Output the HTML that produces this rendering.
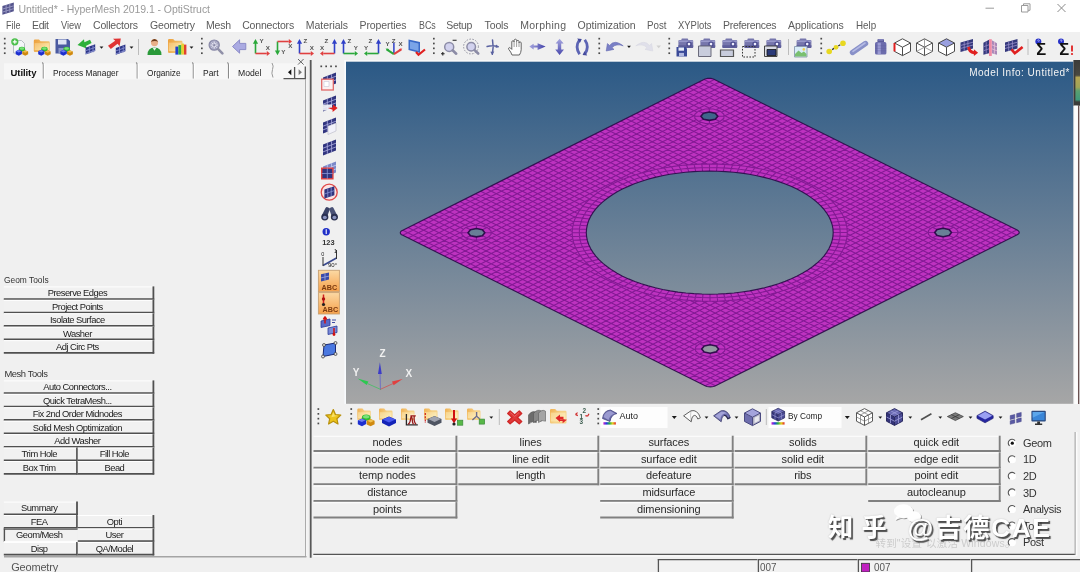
<!DOCTYPE html>
<html lang="zh"><head><meta charset="utf-8"><title>Untitled* - HyperMesh 2019.1 - OptiStruct</title>
<style>
html,body{margin:0;padding:0;background:#f0f0f0;overflow:hidden;}
html{width:1080px;height:572px;}
body{width:1080px;height:572px;overflow:hidden;position:relative;font-family:"Liberation Sans", "Noto Sans CJK SC", sans-serif;}
#chrome,#top{position:absolute;left:0;top:0;}
#txt{position:absolute;left:0;top:0;width:1080px;height:572px;will-change:transform;}
.t{position:absolute;white-space:nowrap;line-height:1;}
.c{transform:translateX(-50%);}
</style></head><body>
<svg id="chrome" width="1080" height="572" viewBox="0 0 1080 572">
<rect x="0" y="0" width="1080" height="572" fill="#f0f0f0" />
<rect x="0" y="0" width="1080" height="32" fill="#ffffff" />
<line x1="985.5" y1="8.2" x2="994" y2="8.2" stroke="#9a9a9a" stroke-width="1" />
<path d="M1021.5 5.5h6.5v6.5h-6.5z M1023.5 5.5v-1.7h6.5v6.5h-2" fill="none" stroke="#9a9a9a" stroke-width="1"/>
<path d="M1057.5 4l8 8M1065.5 4l-8 8" stroke="#8a8a8a" stroke-width="1" fill="none"/>
<rect x="4" y="63.2" width="302" height="16.2" fill="#f7f7f7" />
<path d="M42.1 62.5q1.2 0.5 1.2 2.5V78.5" fill="none" stroke="#8a8a8a" stroke-width="1.1"/>
<line x1="44.3" y1="64" x2="44.3" y2="78.5" stroke="#ffffff" stroke-width="1" />
<path d="M136 62.5q1.2 0.5 1.2 2.5V78.5" fill="none" stroke="#8a8a8a" stroke-width="1.1"/>
<line x1="138.2" y1="64" x2="138.2" y2="78.5" stroke="#ffffff" stroke-width="1" />
<path d="M192.1 62.5q1.2 0.5 1.2 2.5V78.5" fill="none" stroke="#8a8a8a" stroke-width="1.1"/>
<line x1="194.3" y1="64" x2="194.3" y2="78.5" stroke="#ffffff" stroke-width="1" />
<path d="M227.3 62.5q1.2 0.5 1.2 2.5V78.5" fill="none" stroke="#8a8a8a" stroke-width="1.1"/>
<line x1="229.5" y1="64" x2="229.5" y2="78.5" stroke="#ffffff" stroke-width="1" />
<path d="M272 63q2 3 0.5 6.5t0.5 8" fill="none" stroke="#9a9a9a" stroke-width="1"/>
<path d="M283.5 78.7H305.3V66.5M294.6 67V78.5" fill="none" stroke="#555" stroke-width="1.3"/>
<path d="M291.3 69.3v6l-3.3-3z" fill="#111"/>
<path d="M298.6 69.3v6l3.3-3z" fill="#777"/>
<path d="M298 59l5.6 5.6M303.6 59l-5.6 5.6" stroke="#666" stroke-width="1" fill="none"/>
<line x1="305.8" y1="79" x2="305.8" y2="557" stroke="#a4a4a4" stroke-width="1.4" />
<line x1="306.7" y1="79" x2="306.7" y2="556.5" stroke="#ffffff" stroke-width="1" />
<line x1="4" y1="556.8" x2="306.4" y2="556.8" stroke="#a4a4a4" stroke-width="1.5" />
<line x1="310.7" y1="60" x2="310.7" y2="557.8" stroke="#585858" stroke-width="1.8" />
<rect x="3.8" y="286.4" width="150.4" height="13.44" fill="#f1f1f1" />
<line x1="3.8" y1="286.9" x2="153.2" y2="286.9" stroke="#ffffff" stroke-width="1" />
<line x1="3.8" y1="299.14" x2="154.2" y2="299.14" stroke="#505050" stroke-width="1.8" />
<line x1="153.4" y1="286.4" x2="153.4" y2="299.84" stroke="#505050" stroke-width="1.8" />
<rect x="3.8" y="299.84" width="150.4" height="13.44" fill="#f1f1f1" />
<line x1="3.8" y1="300.34" x2="153.2" y2="300.34" stroke="#ffffff" stroke-width="1" />
<line x1="3.8" y1="312.58" x2="154.2" y2="312.58" stroke="#505050" stroke-width="1.8" />
<line x1="153.4" y1="299.84" x2="153.4" y2="313.28" stroke="#505050" stroke-width="1.8" />
<rect x="3.8" y="313.28" width="150.4" height="13.44" fill="#f1f1f1" />
<line x1="3.8" y1="313.78" x2="153.2" y2="313.78" stroke="#ffffff" stroke-width="1" />
<line x1="3.8" y1="326.02" x2="154.2" y2="326.02" stroke="#505050" stroke-width="1.8" />
<line x1="153.4" y1="313.28" x2="153.4" y2="326.72" stroke="#505050" stroke-width="1.8" />
<rect x="3.8" y="326.72" width="150.4" height="13.44" fill="#f1f1f1" />
<line x1="3.8" y1="327.22" x2="153.2" y2="327.22" stroke="#ffffff" stroke-width="1" />
<line x1="3.8" y1="339.46" x2="154.2" y2="339.46" stroke="#505050" stroke-width="1.8" />
<line x1="153.4" y1="326.72" x2="153.4" y2="340.16" stroke="#505050" stroke-width="1.8" />
<rect x="3.8" y="340.16" width="150.4" height="13.44" fill="#f1f1f1" />
<line x1="3.8" y1="340.66" x2="153.2" y2="340.66" stroke="#ffffff" stroke-width="1" />
<line x1="3.8" y1="352.9" x2="154.2" y2="352.9" stroke="#505050" stroke-width="1.8" />
<line x1="153.4" y1="340.16" x2="153.4" y2="353.6" stroke="#505050" stroke-width="1.8" />
<rect x="3.8" y="380.4" width="150.4" height="13.44" fill="#f1f1f1" />
<line x1="3.8" y1="380.9" x2="153.2" y2="380.9" stroke="#ffffff" stroke-width="1" />
<line x1="3.8" y1="393.14" x2="154.2" y2="393.14" stroke="#505050" stroke-width="1.8" />
<line x1="153.4" y1="380.4" x2="153.4" y2="393.84" stroke="#505050" stroke-width="1.8" />
<rect x="3.8" y="393.84" width="150.4" height="13.44" fill="#f1f1f1" />
<line x1="3.8" y1="394.34" x2="153.2" y2="394.34" stroke="#ffffff" stroke-width="1" />
<line x1="3.8" y1="406.58" x2="154.2" y2="406.58" stroke="#505050" stroke-width="1.8" />
<line x1="153.4" y1="393.84" x2="153.4" y2="407.28" stroke="#505050" stroke-width="1.8" />
<rect x="3.8" y="407.28" width="150.4" height="13.44" fill="#f1f1f1" />
<line x1="3.8" y1="407.78" x2="153.2" y2="407.78" stroke="#ffffff" stroke-width="1" />
<line x1="3.8" y1="420.02" x2="154.2" y2="420.02" stroke="#505050" stroke-width="1.8" />
<line x1="153.4" y1="407.28" x2="153.4" y2="420.72" stroke="#505050" stroke-width="1.8" />
<rect x="3.8" y="420.72" width="150.4" height="13.44" fill="#f1f1f1" />
<line x1="3.8" y1="421.22" x2="153.2" y2="421.22" stroke="#ffffff" stroke-width="1" />
<line x1="3.8" y1="433.46" x2="154.2" y2="433.46" stroke="#505050" stroke-width="1.8" />
<line x1="153.4" y1="420.72" x2="153.4" y2="434.16" stroke="#505050" stroke-width="1.8" />
<rect x="3.8" y="434.16" width="150.4" height="13.44" fill="#f1f1f1" />
<line x1="3.8" y1="434.66" x2="153.2" y2="434.66" stroke="#ffffff" stroke-width="1" />
<line x1="3.8" y1="446.9" x2="154.2" y2="446.9" stroke="#505050" stroke-width="1.8" />
<line x1="153.4" y1="434.16" x2="153.4" y2="447.6" stroke="#505050" stroke-width="1.8" />
<rect x="3.8" y="447.6" width="74" height="13.44" fill="#f1f1f1" />
<line x1="3.8" y1="448.1" x2="76.8" y2="448.1" stroke="#ffffff" stroke-width="1" />
<line x1="3.8" y1="460.34" x2="77.8" y2="460.34" stroke="#505050" stroke-width="1.8" />
<line x1="77" y1="447.6" x2="77" y2="461.04" stroke="#505050" stroke-width="1.8" />
<rect x="77.8" y="447.6" width="76.4" height="13.44" fill="#f1f1f1" />
<line x1="77.8" y1="448.1" x2="153.2" y2="448.1" stroke="#ffffff" stroke-width="1" />
<line x1="77.8" y1="460.34" x2="154.2" y2="460.34" stroke="#505050" stroke-width="1.8" />
<line x1="153.4" y1="447.6" x2="153.4" y2="461.04" stroke="#505050" stroke-width="1.8" />
<rect x="3.8" y="461.04" width="74" height="13.44" fill="#f1f1f1" />
<line x1="3.8" y1="461.54" x2="76.8" y2="461.54" stroke="#ffffff" stroke-width="1" />
<line x1="3.8" y1="473.78" x2="77.8" y2="473.78" stroke="#505050" stroke-width="1.8" />
<line x1="77" y1="461.04" x2="77" y2="474.48" stroke="#505050" stroke-width="1.8" />
<rect x="77.8" y="461.04" width="76.4" height="13.44" fill="#f1f1f1" />
<line x1="77.8" y1="461.54" x2="153.2" y2="461.54" stroke="#ffffff" stroke-width="1" />
<line x1="77.8" y1="473.78" x2="154.2" y2="473.78" stroke="#505050" stroke-width="1.8" />
<line x1="153.4" y1="461.04" x2="153.4" y2="474.48" stroke="#505050" stroke-width="1.8" />
<rect x="3.8" y="501.6" width="74" height="13.44" fill="#f1f1f1" />
<line x1="3.8" y1="502.1" x2="76.8" y2="502.1" stroke="#ffffff" stroke-width="1" />
<line x1="3.8" y1="514.34" x2="77.8" y2="514.34" stroke="#505050" stroke-width="1.8" />
<line x1="77" y1="501.6" x2="77" y2="515.04" stroke="#505050" stroke-width="1.8" />
<rect x="3.8" y="515.04" width="74" height="13.44" fill="#f1f1f1" />
<line x1="3.8" y1="515.54" x2="76.8" y2="515.54" stroke="#ffffff" stroke-width="1" />
<line x1="3.8" y1="527.78" x2="77.8" y2="527.78" stroke="#505050" stroke-width="1.8" />
<line x1="77" y1="515.04" x2="77" y2="528.48" stroke="#505050" stroke-width="1.8" />
<rect x="77.8" y="515.04" width="76.4" height="13.44" fill="#f1f1f1" />
<line x1="77.8" y1="515.54" x2="153.2" y2="515.54" stroke="#ffffff" stroke-width="1" />
<line x1="77.8" y1="527.78" x2="154.2" y2="527.78" stroke="#505050" stroke-width="1.8" />
<line x1="153.4" y1="515.04" x2="153.4" y2="528.48" stroke="#505050" stroke-width="1.8" />
<rect x="3.8" y="528.48" width="74" height="13.44" fill="#f1f1f1" />
<line x1="3.8" y1="529.08" x2="77.8" y2="529.08" stroke="#505050" stroke-width="1.4" />
<line x1="4.4" y1="528.48" x2="4.4" y2="541.92" stroke="#505050" stroke-width="1.4" />
<line x1="3.8" y1="541.42" x2="77.8" y2="541.42" stroke="#ffffff" stroke-width="1" />
<rect x="77.8" y="528.48" width="76.4" height="13.44" fill="#f1f1f1" />
<line x1="77.8" y1="528.98" x2="153.2" y2="528.98" stroke="#ffffff" stroke-width="1" />
<line x1="77.8" y1="541.22" x2="154.2" y2="541.22" stroke="#505050" stroke-width="1.8" />
<line x1="153.4" y1="528.48" x2="153.4" y2="541.92" stroke="#505050" stroke-width="1.8" />
<rect x="3.8" y="541.92" width="74" height="13.44" fill="#f1f1f1" />
<line x1="3.8" y1="542.42" x2="76.8" y2="542.42" stroke="#ffffff" stroke-width="1" />
<line x1="3.8" y1="554.66" x2="77.8" y2="554.66" stroke="#505050" stroke-width="1.8" />
<line x1="77" y1="541.92" x2="77" y2="555.36" stroke="#505050" stroke-width="1.8" />
<rect x="77.8" y="541.92" width="76.4" height="13.44" fill="#f1f1f1" />
<line x1="77.8" y1="542.42" x2="153.2" y2="542.42" stroke="#ffffff" stroke-width="1" />
<line x1="77.8" y1="554.66" x2="154.2" y2="554.66" stroke="#505050" stroke-width="1.8" />
<line x1="153.4" y1="541.92" x2="153.4" y2="555.36" stroke="#505050" stroke-width="1.8" />
<rect x="657.8" y="559" width="99.5" height="14" fill="#f2f2f2" />
<line x1="657.8" y1="559.6" x2="757.3" y2="559.6" stroke="#555" stroke-width="1.3" />
<line x1="658.4" y1="559" x2="658.4" y2="572" stroke="#555" stroke-width="1.3" />
<rect x="757.8" y="559" width="99.5" height="14" fill="#f2f2f2" />
<line x1="757.8" y1="559.6" x2="857.3" y2="559.6" stroke="#555" stroke-width="1.3" />
<line x1="758.4" y1="559" x2="758.4" y2="572" stroke="#555" stroke-width="1.3" />
<rect x="857.8" y="559" width="112.5" height="14" fill="#f2f2f2" />
<line x1="857.8" y1="559.6" x2="970.3" y2="559.6" stroke="#555" stroke-width="1.3" />
<line x1="858.4" y1="559" x2="858.4" y2="572" stroke="#555" stroke-width="1.3" />
<rect x="971" y="559" width="109" height="14" fill="#f2f2f2" />
<line x1="971" y1="559.6" x2="1080" y2="559.6" stroke="#555" stroke-width="1.3" />
<line x1="971.6" y1="559" x2="971.6" y2="572" stroke="#555" stroke-width="1.3" />
<rect x="861.5" y="563.3" width="8" height="8.7" fill="#c020c0" stroke="#333" stroke-width="0.8"/>
<rect x="313.5" y="435.4" width="143.8" height="16.6" fill="#f0f0f0" />
<line x1="313.5" y1="436.3" x2="456.3" y2="436.3" stroke="#fbfbfb" stroke-width="1.2" />
<line x1="313.5" y1="451.1" x2="457.3" y2="451.1" stroke="#808080" stroke-width="2" />
<line x1="456.4" y1="435.7" x2="456.4" y2="452" stroke="#808080" stroke-width="1.9" />
<rect x="313.5" y="452" width="143.8" height="16.6" fill="#f0f0f0" />
<line x1="313.5" y1="452.9" x2="456.3" y2="452.9" stroke="#fbfbfb" stroke-width="1.2" />
<line x1="313.5" y1="467.7" x2="457.3" y2="467.7" stroke="#808080" stroke-width="2" />
<line x1="456.4" y1="452.3" x2="456.4" y2="468.6" stroke="#808080" stroke-width="1.9" />
<rect x="313.5" y="468.6" width="143.8" height="16.6" fill="#f0f0f0" />
<line x1="313.5" y1="469.5" x2="456.3" y2="469.5" stroke="#fbfbfb" stroke-width="1.2" />
<line x1="313.5" y1="484.3" x2="457.3" y2="484.3" stroke="#808080" stroke-width="2" />
<line x1="456.4" y1="468.9" x2="456.4" y2="485.2" stroke="#808080" stroke-width="1.9" />
<rect x="313.5" y="485.2" width="143.8" height="16.6" fill="#f0f0f0" />
<line x1="313.5" y1="486.1" x2="456.3" y2="486.1" stroke="#fbfbfb" stroke-width="1.2" />
<line x1="313.5" y1="500.9" x2="457.3" y2="500.9" stroke="#808080" stroke-width="2" />
<line x1="456.4" y1="485.5" x2="456.4" y2="501.8" stroke="#808080" stroke-width="1.9" />
<rect x="313.5" y="501.8" width="143.8" height="16.6" fill="#f0f0f0" />
<line x1="313.5" y1="502.7" x2="456.3" y2="502.7" stroke="#fbfbfb" stroke-width="1.2" />
<line x1="313.5" y1="517.5" x2="457.3" y2="517.5" stroke="#808080" stroke-width="2" />
<line x1="456.4" y1="502.1" x2="456.4" y2="518.4" stroke="#808080" stroke-width="1.9" />
<rect x="458.3" y="435.4" width="140.9" height="16.6" fill="#f0f0f0" />
<line x1="458.3" y1="436.3" x2="598.2" y2="436.3" stroke="#fbfbfb" stroke-width="1.2" />
<line x1="458.3" y1="451.1" x2="599.2" y2="451.1" stroke="#808080" stroke-width="2" />
<line x1="598.3" y1="435.7" x2="598.3" y2="452" stroke="#808080" stroke-width="1.9" />
<rect x="458.3" y="452" width="140.9" height="16.6" fill="#f0f0f0" />
<line x1="458.3" y1="452.9" x2="598.2" y2="452.9" stroke="#fbfbfb" stroke-width="1.2" />
<line x1="458.3" y1="467.7" x2="599.2" y2="467.7" stroke="#808080" stroke-width="2" />
<line x1="598.3" y1="452.3" x2="598.3" y2="468.6" stroke="#808080" stroke-width="1.9" />
<rect x="458.3" y="468.6" width="140.9" height="16.6" fill="#f0f0f0" />
<line x1="458.3" y1="469.5" x2="598.2" y2="469.5" stroke="#fbfbfb" stroke-width="1.2" />
<line x1="458.3" y1="484.3" x2="599.2" y2="484.3" stroke="#808080" stroke-width="2" />
<line x1="598.3" y1="468.9" x2="598.3" y2="485.2" stroke="#808080" stroke-width="1.9" />
<rect x="600.2" y="435.4" width="133.4" height="16.6" fill="#f0f0f0" />
<line x1="600.2" y1="436.3" x2="732.6" y2="436.3" stroke="#fbfbfb" stroke-width="1.2" />
<line x1="600.2" y1="451.1" x2="733.6" y2="451.1" stroke="#808080" stroke-width="2" />
<line x1="732.7" y1="435.7" x2="732.7" y2="452" stroke="#808080" stroke-width="1.9" />
<rect x="600.2" y="452" width="133.4" height="16.6" fill="#f0f0f0" />
<line x1="600.2" y1="452.9" x2="732.6" y2="452.9" stroke="#fbfbfb" stroke-width="1.2" />
<line x1="600.2" y1="467.7" x2="733.6" y2="467.7" stroke="#808080" stroke-width="2" />
<line x1="732.7" y1="452.3" x2="732.7" y2="468.6" stroke="#808080" stroke-width="1.9" />
<rect x="600.2" y="468.6" width="133.4" height="16.6" fill="#f0f0f0" />
<line x1="600.2" y1="469.5" x2="732.6" y2="469.5" stroke="#fbfbfb" stroke-width="1.2" />
<line x1="600.2" y1="484.3" x2="733.6" y2="484.3" stroke="#808080" stroke-width="2" />
<line x1="732.7" y1="468.9" x2="732.7" y2="485.2" stroke="#808080" stroke-width="1.9" />
<rect x="600.2" y="485.2" width="133.4" height="16.6" fill="#f0f0f0" />
<line x1="600.2" y1="486.1" x2="732.6" y2="486.1" stroke="#fbfbfb" stroke-width="1.2" />
<line x1="600.2" y1="500.9" x2="733.6" y2="500.9" stroke="#808080" stroke-width="2" />
<line x1="732.7" y1="485.5" x2="732.7" y2="501.8" stroke="#808080" stroke-width="1.9" />
<rect x="600.2" y="501.8" width="133.4" height="16.6" fill="#f0f0f0" />
<line x1="600.2" y1="502.7" x2="732.6" y2="502.7" stroke="#fbfbfb" stroke-width="1.2" />
<line x1="600.2" y1="517.5" x2="733.6" y2="517.5" stroke="#808080" stroke-width="2" />
<line x1="732.7" y1="502.1" x2="732.7" y2="518.4" stroke="#808080" stroke-width="1.9" />
<rect x="734.6" y="435.4" width="132.6" height="16.6" fill="#f0f0f0" />
<line x1="734.6" y1="436.3" x2="866.2" y2="436.3" stroke="#fbfbfb" stroke-width="1.2" />
<line x1="734.6" y1="451.1" x2="867.2" y2="451.1" stroke="#808080" stroke-width="2" />
<line x1="866.3" y1="435.7" x2="866.3" y2="452" stroke="#808080" stroke-width="1.9" />
<rect x="734.6" y="452" width="132.6" height="16.6" fill="#f0f0f0" />
<line x1="734.6" y1="452.9" x2="866.2" y2="452.9" stroke="#fbfbfb" stroke-width="1.2" />
<line x1="734.6" y1="467.7" x2="867.2" y2="467.7" stroke="#808080" stroke-width="2" />
<line x1="866.3" y1="452.3" x2="866.3" y2="468.6" stroke="#808080" stroke-width="1.9" />
<rect x="734.6" y="468.6" width="132.6" height="16.6" fill="#f0f0f0" />
<line x1="734.6" y1="469.5" x2="866.2" y2="469.5" stroke="#fbfbfb" stroke-width="1.2" />
<line x1="734.6" y1="484.3" x2="867.2" y2="484.3" stroke="#808080" stroke-width="2" />
<line x1="866.3" y1="468.9" x2="866.3" y2="485.2" stroke="#808080" stroke-width="1.9" />
<rect x="868.2" y="435.4" width="132.4" height="16.6" fill="#f0f0f0" />
<line x1="868.2" y1="436.3" x2="999.6" y2="436.3" stroke="#fbfbfb" stroke-width="1.2" />
<line x1="868.2" y1="451.1" x2="1000.6" y2="451.1" stroke="#808080" stroke-width="2" />
<line x1="999.7" y1="435.7" x2="999.7" y2="452" stroke="#808080" stroke-width="1.9" />
<rect x="868.2" y="452" width="132.4" height="16.6" fill="#f0f0f0" />
<line x1="868.2" y1="452.9" x2="999.6" y2="452.9" stroke="#fbfbfb" stroke-width="1.2" />
<line x1="868.2" y1="467.7" x2="1000.6" y2="467.7" stroke="#808080" stroke-width="2" />
<line x1="999.7" y1="452.3" x2="999.7" y2="468.6" stroke="#808080" stroke-width="1.9" />
<rect x="868.2" y="468.6" width="132.4" height="16.6" fill="#f0f0f0" />
<line x1="868.2" y1="469.5" x2="999.6" y2="469.5" stroke="#fbfbfb" stroke-width="1.2" />
<line x1="868.2" y1="484.3" x2="1000.6" y2="484.3" stroke="#808080" stroke-width="2" />
<line x1="999.7" y1="468.9" x2="999.7" y2="485.2" stroke="#808080" stroke-width="1.9" />
<rect x="868.2" y="485.2" width="132.4" height="16.6" fill="#f0f0f0" />
<line x1="868.2" y1="486.1" x2="999.6" y2="486.1" stroke="#fbfbfb" stroke-width="1.2" />
<line x1="868.2" y1="500.9" x2="1000.6" y2="500.9" stroke="#808080" stroke-width="2" />
<line x1="999.7" y1="485.5" x2="999.7" y2="501.8" stroke="#808080" stroke-width="1.9" />
<line x1="313.3" y1="554.3" x2="1075.5" y2="554.3" stroke="#555" stroke-width="1.3" />
<line x1="1075.2" y1="432" x2="1075.2" y2="554.8" stroke="#a0a0a0" stroke-width="1.2" />
<line x1="1076.6" y1="432" x2="1076.6" y2="556" stroke="#fcfcfc" stroke-width="1.6" />
<line x1="313" y1="556" x2="1076" y2="556" stroke="#fafafa" stroke-width="1.4" />
<circle cx="1012.3" cy="443.2" r="3.6" fill="#ffffff"/>
<path d="M1015 440.6A3.8 3.8 0 1 0 1009.6 445.9" fill="none" stroke="#555" stroke-width="1.1"/>
<circle cx="1012.3" cy="443.2" r="1.6" fill="#111"/>
<circle cx="1012.3" cy="459.77" r="3.6" fill="#ffffff"/>
<path d="M1015 457.17A3.8 3.8 0 1 0 1009.6 462.47" fill="none" stroke="#555" stroke-width="1.1"/>
<circle cx="1012.3" cy="476.34" r="3.6" fill="#ffffff"/>
<path d="M1015 473.74A3.8 3.8 0 1 0 1009.6 479.04" fill="none" stroke="#555" stroke-width="1.1"/>
<circle cx="1012.3" cy="492.91" r="3.6" fill="#ffffff"/>
<path d="M1015 490.31A3.8 3.8 0 1 0 1009.6 495.61" fill="none" stroke="#555" stroke-width="1.1"/>
<circle cx="1012.3" cy="509.48" r="3.6" fill="#ffffff"/>
<path d="M1015 506.88A3.8 3.8 0 1 0 1009.6 512.18" fill="none" stroke="#555" stroke-width="1.1"/>
<circle cx="1012.3" cy="526.05" r="3.6" fill="#ffffff"/>
<path d="M1015 523.45A3.8 3.8 0 1 0 1009.6 528.75" fill="none" stroke="#555" stroke-width="1.1"/>
<circle cx="1012.3" cy="542.62" r="3.6" fill="#ffffff"/>
<path d="M1015 540.02A3.8 3.8 0 1 0 1009.6 545.32" fill="none" stroke="#555" stroke-width="1.1"/>
<defs><linearGradient id="vg" x1="0" y1="0" x2="0" y2="1"><stop offset="0" stop-color="#2b5986"/><stop offset="1" stop-color="#a6a6a6"/></linearGradient><clipPath id="vclip"><rect x="346" y="61.6" width="727.4" height="342.2"/></clipPath></defs>
<rect x="344.4" y="60.2" width="730.6" height="1.5" fill="#fbfbfb" />
<rect x="344.4" y="60.2" width="1.7" height="343.7" fill="#f8fbfd" />
<rect x="346" y="61.7" width="727.3" height="342.1" fill="url(#vg)" />
<defs><clipPath id="pclip"><path d="M1017.2 230.1L1018.3 230.8L1019.0 231.6L1019.2 232.5L1019.0 233.3L1018.3 234.1L1017.2 234.8L715.0 386.0L713.6 386.5L712.0 386.8L710.3 386.9L708.6 386.8L707.0 386.5L705.6 386.0L402.3 235.1L401.2 234.4L400.5 233.6L400.3 232.7L400.5 231.9L401.2 231.1L402.3 230.4L704.5 79.2L705.9 78.7L707.5 78.4L709.2 78.3L710.9 78.4L712.5 78.7L713.9 79.2ZM796.9 189.0L802.4 192.0L807.5 195.1L812.2 198.4L816.5 201.8L820.3 205.3L823.7 209.0L826.5 212.8L828.9 216.6L830.7 220.5L832.1 224.5L832.9 228.5L833.2 232.5L832.9 236.6L832.1 240.6L830.8 244.6L829.0 248.5L826.7 252.3L823.9 256.1L820.5 259.8L816.7 263.3L812.5 266.7L807.8 270.0L802.7 273.1L797.2 276.1L791.3 278.8L785.1 281.4L778.5 283.7L771.6 285.9L764.5 287.8L757.2 289.4L749.6 290.9L741.9 292.0L734.0 293.0L726.1 293.6L718.0 294.0L710.0 294.2L701.9 294.0L693.9 293.6L685.9 293.0L678.0 292.1L670.3 290.9L662.7 289.5L655.4 287.8L648.2 285.9L641.4 283.8L634.8 281.5L628.5 278.9L622.6 276.2L617.1 273.2L612.0 270.1L607.3 266.8L603.0 263.4L599.2 259.9L595.8 256.2L593.0 252.4L590.6 248.6L588.8 244.7L587.4 240.7L586.6 236.7L586.3 232.7L586.6 228.6L587.4 224.6L588.7 220.6L590.5 216.7L592.8 212.9L595.6 209.1L599.0 205.4L602.8 201.9L607.0 198.5L611.7 195.2L616.8 192.1L622.3 189.1L628.2 186.4L634.4 183.8L641.0 181.5L647.9 179.3L655.0 177.4L662.3 175.8L669.9 174.3L677.6 173.2L685.5 172.2L693.4 171.6L701.5 171.2L709.5 171.0L717.6 171.2L725.6 171.6L733.6 172.2L741.5 173.1L749.2 174.3L756.8 175.7L764.1 177.4L771.3 179.3L778.1 181.4L784.7 183.7L791.0 186.3ZM482.4 229.7L484.8 232.7L482.4 235.7L476.4 236.9L470.5 235.7L468.0 232.7L470.5 229.7L476.4 228.5ZM716.1 346.0L718.6 349.0L716.1 351.9L710.2 353.2L704.2 352.0L701.7 349.0L704.2 346.0L710.1 344.8ZM715.3 113.2L717.8 116.2L715.3 119.2L709.4 120.4L703.4 119.2L700.9 116.2L703.4 113.3L709.3 112.0ZM949.0 229.5L951.5 232.5L949.0 235.5L943.1 236.7L937.1 235.5L934.7 232.5L937.1 229.5L943.1 228.3Z" clip-rule="evenodd"/></clipPath></defs>
<path d="M1017.2 230.1L1018.3 230.8L1019.0 231.6L1019.2 232.5L1019.0 233.3L1018.3 234.1L1017.2 234.8L715.0 386.0L713.6 386.5L712.0 386.8L710.3 386.9L708.6 386.8L707.0 386.5L705.6 386.0L402.3 235.1L401.2 234.4L400.5 233.6L400.3 232.7L400.5 231.9L401.2 231.1L402.3 230.4L704.5 79.2L705.9 78.7L707.5 78.4L709.2 78.3L710.9 78.4L712.5 78.7L713.9 79.2ZM796.9 189.0L802.4 192.0L807.5 195.1L812.2 198.4L816.5 201.8L820.3 205.3L823.7 209.0L826.5 212.8L828.9 216.6L830.7 220.5L832.1 224.5L832.9 228.5L833.2 232.5L832.9 236.6L832.1 240.6L830.8 244.6L829.0 248.5L826.7 252.3L823.9 256.1L820.5 259.8L816.7 263.3L812.5 266.7L807.8 270.0L802.7 273.1L797.2 276.1L791.3 278.8L785.1 281.4L778.5 283.7L771.6 285.9L764.5 287.8L757.2 289.4L749.6 290.9L741.9 292.0L734.0 293.0L726.1 293.6L718.0 294.0L710.0 294.2L701.9 294.0L693.9 293.6L685.9 293.0L678.0 292.1L670.3 290.9L662.7 289.5L655.4 287.8L648.2 285.9L641.4 283.8L634.8 281.5L628.5 278.9L622.6 276.2L617.1 273.2L612.0 270.1L607.3 266.8L603.0 263.4L599.2 259.9L595.8 256.2L593.0 252.4L590.6 248.6L588.8 244.7L587.4 240.7L586.6 236.7L586.3 232.7L586.6 228.6L587.4 224.6L588.7 220.6L590.5 216.7L592.8 212.9L595.6 209.1L599.0 205.4L602.8 201.9L607.0 198.5L611.7 195.2L616.8 192.1L622.3 189.1L628.2 186.4L634.4 183.8L641.0 181.5L647.9 179.3L655.0 177.4L662.3 175.8L669.9 174.3L677.6 173.2L685.5 172.2L693.4 171.6L701.5 171.2L709.5 171.0L717.6 171.2L725.6 171.6L733.6 172.2L741.5 173.1L749.2 174.3L756.8 175.7L764.1 177.4L771.3 179.3L778.1 181.4L784.7 183.7L791.0 186.3ZM482.4 229.7L484.8 232.7L482.4 235.7L476.4 236.9L470.5 235.7L468.0 232.7L470.5 229.7L476.4 228.5ZM716.1 346.0L718.6 349.0L716.1 351.9L710.2 353.2L704.2 352.0L701.7 349.0L704.2 346.0L710.1 344.8ZM715.3 113.2L717.8 116.2L715.3 119.2L709.4 120.4L703.4 119.2L700.9 116.2L703.4 113.3L709.3 112.0ZM949.0 229.5L951.5 232.5L949.0 235.5L943.1 236.7L937.1 235.5L934.7 232.5L937.1 229.5L943.1 228.3Z" fill="#be32c0" fill-rule="evenodd"/>
<defs><filter id="mb" x="-2%" y="-2%" width="104%" height="104%"><feGaussianBlur stdDeviation="0.6"/></filter></defs>
<g clip-path="url(#pclip)"><path d="M402.8 230.2L715.5 385.7M402.8 235.3L714.4 79.5M408.0 227.6L720.7 383.1M408.0 237.9L719.6 82.1M413.2 225.0L725.9 380.5M413.2 240.5L724.8 84.7M418.4 222.4L731.1 377.9M418.4 243.1L730.0 87.3M423.5 219.8L736.3 375.3M423.6 245.7L735.3 89.9M428.7 217.2L461.4 233.4M475.0 240.2L695.2 349.7M708.8 356.5L741.5 372.7M428.8 248.3L461.4 232.0M475.0 225.2L694.4 115.5M707.9 108.7L740.5 92.4M433.9 214.6L463.2 229.1M483.7 239.3L696.9 345.4M717.4 355.6L746.7 370.1M434.1 250.9L463.2 236.3M483.6 226.1L696.1 119.8M716.5 109.6L745.7 95.0M439.1 212.0L468.2 226.4M489.0 236.8L701.9 342.7M722.8 353.1L751.9 367.5M439.3 253.5L468.2 239.0M489.0 228.6L701.1 122.5M721.9 112.1L750.9 97.6M444.3 209.4L476.2 225.2M491.5 232.8L709.9 341.5M725.2 349.1L757.0 364.9M444.5 256.1L476.2 240.2M491.5 232.6L709.1 123.7M724.4 116.1L756.1 100.2M449.5 206.8L762.2 362.3M449.7 258.7L761.3 102.8M454.7 204.2L767.4 359.7M454.9 261.3L766.5 105.4M459.9 201.6L590.0 266.3M642.5 292.4L772.6 357.1M460.1 263.9L589.8 199.0M642.1 172.8L771.7 108.0M465.1 199.0L580.9 256.6M662.0 296.9L777.8 354.5M465.3 266.5L580.8 208.7M661.5 168.3L777.0 110.6M470.3 196.4L576.3 249.1M677.0 299.2L783.0 351.9M470.5 269.0L576.2 216.2M676.6 166.0L782.2 113.2M475.5 193.8L573.7 242.6M690.0 300.5L788.2 349.3M475.8 271.6L573.6 222.7M689.5 164.7L787.4 115.8M480.7 191.2L572.5 236.9M701.6 301.1L793.4 346.7M481.0 274.2L572.5 228.5M701.1 164.1L792.6 118.4M485.9 188.6L572.2 231.5M712.2 301.2L798.6 344.1M486.2 276.8L572.2 233.8M711.8 164.0L797.8 121.0M491.1 186.0L572.7 226.6M722.1 300.9L803.8 341.6M491.4 279.4L572.8 238.7M721.6 164.3L803.0 123.6M496.3 183.4L573.8 222.0M731.4 300.4L809.0 339.0M496.6 282.0L573.9 243.3M730.9 164.8L808.2 126.2M501.4 180.8L575.5 217.6M740.1 299.5L814.2 336.4M501.8 284.6L575.6 247.7M739.6 165.7L813.4 128.7M506.6 178.2L577.6 213.5M748.4 298.5L819.4 333.8M507.0 287.2L577.8 251.8M747.9 166.7L818.6 131.3M511.8 175.6L580.1 209.6M756.3 297.2L824.6 331.2M512.2 289.8L580.3 255.7M755.8 168.0L823.9 133.9M517.0 173.0L583.1 205.8M763.7 295.7L829.8 328.6M517.5 292.4L583.2 259.5M763.3 169.4L829.1 136.5M522.2 170.4L586.3 202.3M770.9 294.1L835.0 326.0M522.7 295.0L586.5 263.0M770.4 171.1L834.3 139.1M527.4 167.8L589.9 198.9M777.7 292.3L840.1 323.4M527.9 297.6L590.1 266.4M777.2 172.8L839.5 141.7M532.6 165.2L593.8 195.7M784.1 290.3L845.3 320.8M533.1 300.2L594.1 269.7M783.7 174.8L844.7 144.3M537.8 162.6L598.0 192.6M790.3 288.2L850.5 318.2M538.3 302.8L598.3 272.7M789.9 176.9L849.9 146.9M543.0 160.0L602.5 189.6M796.2 286.0L855.7 315.6M543.5 305.3L602.8 275.7M795.9 179.1L855.1 149.5M548.2 157.4L607.3 186.8M801.8 283.6L860.9 313.0M548.7 307.9L607.6 278.5M801.5 181.5L860.3 152.1M553.4 154.8L612.3 184.1M807.2 281.1L866.1 310.4M553.9 310.5L612.7 281.2M806.8 184.0L865.6 154.7M558.6 152.2L617.7 181.6M812.2 278.4L871.3 307.8M559.2 313.1L618.0 283.7M811.9 186.7L870.8 157.3M563.8 149.6L623.3 179.2M817.0 275.6L876.5 305.2M564.4 315.7L623.6 286.1M816.7 189.5L876.0 159.9M569.0 147.0L629.2 177.0M821.5 272.6L881.7 302.6M569.6 318.3L629.6 288.3M821.2 192.5L881.2 162.4M574.2 144.4L635.4 174.9M825.7 269.5L886.9 300.0M574.8 320.9L635.8 290.4M825.4 195.5L886.4 165.0M579.4 141.8L641.8 172.9M829.6 266.3L892.1 297.4M580.0 323.5L642.3 292.4M829.4 198.8L891.6 167.6M584.5 139.2L648.6 171.1M833.2 262.9L897.3 294.8M585.2 326.1L649.1 294.1M833.0 202.2L896.8 170.2M589.7 136.6L655.8 169.5M836.4 259.4L902.5 292.2M590.4 328.7L656.2 295.8M836.3 205.7L902.0 172.8M594.9 134.0L663.2 168.0M839.4 255.6L907.7 289.6M595.6 331.3L663.7 297.2M839.2 209.5L907.3 175.4M600.1 131.4L671.1 166.7M841.9 251.7L912.9 287.0M600.9 333.9L671.6 298.5M841.7 213.4L912.5 178.0M605.3 128.8L679.4 165.7M844.0 247.6L918.1 284.4M606.1 336.5L679.9 299.5M843.9 217.5L917.7 180.6M610.5 126.2L688.1 164.8M845.7 243.2L923.2 281.8M611.3 339.0L688.6 300.4M845.6 221.9L922.9 183.2M615.7 123.6L697.4 164.3M846.8 238.6L928.4 279.2M616.5 341.6L697.9 300.9M846.7 226.5L928.1 185.8M620.9 121.1L707.3 164.0M847.3 233.7L933.6 276.6M621.7 344.2L707.7 301.2M847.3 231.4L933.3 188.4M626.1 118.5L717.9 164.1M847.0 228.3L938.8 274.0M626.9 346.8L718.4 301.1M847.0 236.7L938.5 191.0M631.3 115.9L729.5 164.7M845.8 222.6L944.0 271.4M632.1 349.4L730.0 300.5M845.9 242.5L943.7 193.6M636.5 113.3L742.5 166.0M843.2 216.1L949.2 268.8M637.3 352.0L742.9 299.2M843.3 249.0L949.0 196.2M641.7 110.7L757.5 168.3M838.6 208.6L954.4 266.2M642.5 354.6L758.0 296.9M838.7 256.5L954.2 198.7M646.9 108.1L777.0 172.8M829.5 198.9L959.6 263.6M647.8 357.2L777.4 292.4M829.7 266.2L959.4 201.3M652.1 105.5L964.8 261.0M653.0 359.8L964.6 203.9M657.3 102.9L970.0 258.4M658.2 362.4L969.8 206.5M662.5 100.3L694.3 116.1M709.6 123.7L928.0 232.4M943.3 240.0L975.2 255.8M663.4 365.0L695.1 349.1M710.4 341.5L928.0 232.6M943.3 225.0L975.0 209.1M667.6 97.7L696.7 112.1M717.6 122.5L930.5 228.4M951.3 238.8L980.4 253.2M668.6 367.6L697.6 353.1M718.4 342.7L930.5 236.6M951.3 226.2L980.2 211.7M672.8 95.1L702.1 109.6M722.6 119.8L935.8 225.9M956.3 236.1L985.6 250.6M673.8 370.2L703.0 355.6M723.4 345.4L935.9 239.1M956.3 228.9L985.4 214.3M678.0 92.5L710.7 108.7M724.3 115.5L944.5 225.0M958.1 231.8L990.8 248.0M679.0 372.8L711.6 356.5M725.1 349.7L944.5 240.0M958.1 233.2L990.7 216.9M683.2 89.9L996.0 245.4M684.2 375.3L995.9 219.5M688.4 87.3L1001.1 242.8M689.5 377.9L1001.1 222.1M693.6 84.7L1006.3 240.2M694.7 380.5L1006.3 224.7M698.8 82.1L1011.5 237.6M699.9 383.1L1011.5 227.3M704.0 79.5L1016.7 235.0M705.1 385.7L1016.7 229.9M801.8 186.5L807.7 189.6L813.1 192.9L818.1 196.4L822.6 200.0L826.7 203.8L830.2 207.6L833.2 211.6L835.7 215.7L837.7 219.8L839.1 224.0L839.9 228.3L840.2 232.5L840.0 236.8L839.1 241.0L837.8 245.2L835.8 249.4L833.4 253.5L830.4 257.4L826.9 261.3L822.9 265.1L818.4 268.7L813.4 272.2L808.0 275.5L802.2 278.6L796.0 281.5L789.4 284.2L782.4 286.7L775.2 288.9L767.7 290.9L759.9 292.7L751.9 294.2L743.7 295.4L735.4 296.4L727.0 297.1L718.5 297.5L710.0 297.7L701.4 297.5L692.9 297.1L684.5 296.4L676.2 295.5L668.0 294.2L660.0 292.7L652.3 291.0L644.7 289.0L637.5 286.7L630.5 284.3L623.9 281.6L617.7 278.7L611.8 275.6L606.4 272.3L601.4 268.8L596.9 265.2L592.8 261.4L589.3 257.6L586.3 253.6L583.8 249.5L581.8 245.4L580.4 241.2L579.6 236.9L579.3 232.7L579.5 228.4L580.4 224.2L581.7 220.0L583.7 215.8L586.1 211.7L589.1 207.8L592.6 203.9L596.6 200.1L601.1 196.5L606.1 193.0L611.5 189.7L617.3 186.6L623.5 183.7L630.1 181.0L637.1 178.5L644.3 176.3L651.8 174.3L659.6 172.5L667.6 171.0L675.8 169.8L684.1 168.8L692.5 168.1L701.0 167.7L709.5 167.5L718.1 167.7L726.6 168.1L735.0 168.8L743.3 169.7L751.5 171.0L759.5 172.5L767.2 174.2L774.8 176.2L782.0 178.5L789.0 180.9L795.6 183.6ZM806.8 184.0L813.0 187.3L818.7 190.8L824.0 194.4L828.7 198.2L833.0 202.2L836.7 206.3L839.9 210.5L842.5 214.8L844.6 219.2L846.1 223.6L847.0 228.0L847.3 232.5L847.0 237.0L846.1 241.5L844.7 245.9L842.7 250.3L840.1 254.6L836.9 258.8L833.2 262.9L829.0 266.8L824.2 270.7L819.0 274.3L813.3 277.8L807.2 281.1L800.6 284.1L793.7 287.0L786.4 289.6L778.7 292.0L770.8 294.1L762.6 296.0L754.2 297.5L745.6 298.8L736.8 299.9L727.9 300.6L719.0 301.1L710.0 301.2L701.0 301.1L692.0 300.6L683.2 299.9L674.4 298.9L665.8 297.6L657.3 296.0L649.1 294.2L641.2 292.0L633.5 289.7L626.2 287.1L619.2 284.2L612.7 281.2L606.5 277.9L600.8 274.4L595.5 270.8L590.8 267.0L586.5 263.0L582.8 258.9L579.6 254.7L577.0 250.4L574.9 246.0L573.4 241.6L572.5 237.2L572.2 232.7L572.5 228.2L573.4 223.7L574.8 219.3L576.8 214.9L579.4 210.6L582.6 206.4L586.3 202.3L590.5 198.4L595.3 194.5L600.5 190.9L606.2 187.4L612.3 184.1L618.9 181.1L625.8 178.2L633.1 175.6L640.8 173.2L648.7 171.1L656.9 169.2L665.3 167.7L673.9 166.4L682.7 165.3L691.6 164.6L700.5 164.1L709.5 164.0L718.5 164.1L727.5 164.6L736.3 165.3L745.1 166.3L753.7 167.6L762.2 169.2L770.4 171.0L778.3 173.2L786.0 175.5L793.3 178.1L800.3 181.0ZM796.9 189.0L806.8 184.0M801.6 191.5L812.1 186.8M806.1 194.2L817.1 189.8M810.3 196.9L821.8 192.8M814.1 199.8L826.1 196.0M817.7 202.8L830.0 199.4M820.8 205.8L833.6 202.8M823.7 209.0L836.7 206.3M826.2 212.2L839.5 209.9M828.3 215.5L841.8 213.5M830.0 218.8L843.8 217.3M831.4 222.2L845.3 221.0M832.4 225.6L846.4 224.9M833.0 229.1L847.1 228.7M833.2 232.5L847.3 232.5M833.0 236.0L847.1 236.4M832.4 239.4L846.5 240.2M831.5 242.9L845.4 244.0M830.1 246.2L843.9 247.8M828.4 249.6L842.0 251.5M826.3 252.9L839.7 255.2M823.9 256.1L836.9 258.8M821.0 259.3L833.8 262.3M817.9 262.3L830.2 265.7M814.4 265.3L826.3 269.0M810.5 268.2L822.1 272.2M806.4 270.9L817.4 275.3M801.9 273.6L812.5 278.3M797.2 276.1L807.2 281.1M792.1 278.5L801.6 283.7M786.9 280.7L795.7 286.2M781.3 282.8L789.5 288.5M775.6 284.7L783.1 290.7M769.6 286.4L776.5 292.6M763.5 288.0L769.6 294.4M757.2 289.4L762.6 296.0M750.7 290.7L755.4 297.3M744.1 291.7L748.1 298.5M737.4 292.6L740.6 299.5M730.6 293.3L733.0 300.2M723.8 293.8L725.4 300.8M716.9 294.1L717.7 301.1M710.0 294.2L710.0 301.2M703.0 294.1L702.3 301.1M696.2 293.8L694.6 300.8M689.3 293.3L687.0 300.2M682.5 292.6L679.4 299.5M675.8 291.8L671.9 298.5M669.2 290.7L664.6 297.4M662.7 289.5L657.3 296.0M656.4 288.1L650.3 294.4M650.2 286.5L643.4 292.7M644.3 284.8L636.8 290.7M638.5 282.8L630.4 288.6M633.0 280.8L624.2 286.3M627.7 278.5L618.3 283.8M622.6 276.2L612.7 281.2M617.9 273.7L607.4 278.4M613.4 271.0L602.4 275.4M609.2 268.3L597.7 272.4M605.4 265.4L593.4 269.2M601.8 262.4L589.5 265.8M598.7 259.4L585.9 262.4M595.8 256.2L582.8 258.9M593.3 253.0L580.0 255.3M591.2 249.7L577.7 251.7M589.5 246.4L575.7 247.9M588.1 243.0L574.2 244.2M587.1 239.6L573.1 240.3M586.5 236.1L572.4 236.5M586.3 232.7L572.2 232.7M586.5 229.2L572.4 228.8M587.1 225.8L573.0 225.0M588.0 222.3L574.1 221.2M589.4 219.0L575.6 217.4M591.1 215.6L577.5 213.7M593.2 212.3L579.8 210.0M595.6 209.1L582.6 206.4M598.5 205.9L585.7 202.9M601.6 202.9L589.3 199.5M605.1 199.9L593.2 196.2M609.0 197.0L597.4 193.0M613.1 194.3L602.1 189.9M617.6 191.6L607.0 186.9M622.3 189.1L612.3 184.1M627.4 186.7L617.9 181.5M632.6 184.5L623.8 179.0M638.2 182.4L630.0 176.7M643.9 180.5L636.4 174.5M649.9 178.8L643.0 172.6M656.0 177.2L649.9 170.8M662.3 175.8L656.9 169.2M668.8 174.5L664.1 167.9M675.4 173.5L671.4 166.7M682.1 172.6L678.9 165.7M688.9 171.9L686.5 165.0M695.7 171.4L694.1 164.4M702.6 171.1L701.8 164.1M709.5 171.0L709.5 164.0M716.5 171.1L717.2 164.1M723.3 171.4L724.9 164.4M730.2 171.9L732.5 165.0M737.0 172.6L740.1 165.7M743.7 173.4L747.6 166.7M750.3 174.5L754.9 167.8M756.8 175.7L762.2 169.2M763.1 177.1L769.2 170.8M769.3 178.7L776.1 172.5M775.2 180.4L782.7 174.5M781.0 182.4L789.1 176.6M786.5 184.4L795.3 178.9M791.8 186.7L801.2 181.4M487.0 227.4L491.0 230.8L491.0 234.6L487.1 238.0L480.3 240.0L472.6 240.0L465.8 238.0L461.9 234.7L461.9 230.8L465.8 227.4L472.5 225.5L480.3 225.5ZM482.4 229.7L487.0 227.4M484.8 232.7L491.5 232.7M482.4 235.7L487.1 238.0M476.4 236.9L476.5 240.2M470.5 235.7L465.8 238.0M468.0 232.7L461.4 232.7M470.5 229.7L465.8 227.4M476.4 228.5L476.4 225.2M720.8 343.7L724.7 347.0L724.7 350.9L720.8 354.3L714.1 356.2L706.3 356.2L699.5 354.3L695.6 350.9L695.6 347.0L699.5 343.7L706.2 341.7L714.0 341.7ZM716.1 346.0L720.8 343.7M718.6 349.0L725.2 349.0M716.1 351.9L720.8 354.3M710.2 353.2L710.2 356.5M704.2 352.0L699.5 354.3M701.7 349.0L695.1 349.0M704.2 346.0L699.5 343.7M710.1 344.8L710.1 341.5M720.0 110.9L723.9 114.3L723.9 118.2L720.0 121.5L713.3 123.5L705.5 123.5L698.7 121.5L694.8 118.2L694.8 114.3L698.7 110.9L705.4 109.0L713.2 109.0ZM715.3 113.2L720.0 110.9M717.8 116.2L724.4 116.2M715.3 119.2L720.0 121.5M709.4 120.4L709.4 123.7M703.4 119.2L698.7 121.5M700.9 116.2L694.3 116.2M703.4 113.3L698.7 110.9M709.3 112.0L709.3 108.7M953.7 227.2L957.6 230.5L957.6 234.4L953.7 237.8L947.0 239.7L939.2 239.7L932.5 237.8L928.5 234.4L928.5 230.6L932.4 227.2L939.2 225.2L946.9 225.2ZM949.0 229.5L953.7 227.2M951.5 232.5L958.1 232.5M949.0 235.5L953.7 237.8M943.1 236.7L943.1 240.0M937.1 235.5L932.5 237.8M934.7 232.5L928.0 232.5M937.1 229.5L932.4 227.2M943.1 228.3L943.0 225.0" fill="none" stroke="#4a0a6a" stroke-opacity="0.5" stroke-width="1.1" filter="url(#mb)"/></g>
<path d="M1017.2 230.1L1018.3 230.8L1019.0 231.6L1019.2 232.5L1019.0 233.3L1018.3 234.1L1017.2 234.8L715.0 386.0L713.6 386.5L712.0 386.8L710.3 386.9L708.6 386.8L707.0 386.5L705.6 386.0L402.3 235.1L401.2 234.4L400.5 233.6L400.3 232.7L400.5 231.9L401.2 231.1L402.3 230.4L704.5 79.2L705.9 78.7L707.5 78.4L709.2 78.3L710.9 78.4L712.5 78.7L713.9 79.2ZM796.9 189.0L802.4 192.0L807.5 195.1L812.2 198.4L816.5 201.8L820.3 205.3L823.7 209.0L826.5 212.8L828.9 216.6L830.7 220.5L832.1 224.5L832.9 228.5L833.2 232.5L832.9 236.6L832.1 240.6L830.8 244.6L829.0 248.5L826.7 252.3L823.9 256.1L820.5 259.8L816.7 263.3L812.5 266.7L807.8 270.0L802.7 273.1L797.2 276.1L791.3 278.8L785.1 281.4L778.5 283.7L771.6 285.9L764.5 287.8L757.2 289.4L749.6 290.9L741.9 292.0L734.0 293.0L726.1 293.6L718.0 294.0L710.0 294.2L701.9 294.0L693.9 293.6L685.9 293.0L678.0 292.1L670.3 290.9L662.7 289.5L655.4 287.8L648.2 285.9L641.4 283.8L634.8 281.5L628.5 278.9L622.6 276.2L617.1 273.2L612.0 270.1L607.3 266.8L603.0 263.4L599.2 259.9L595.8 256.2L593.0 252.4L590.6 248.6L588.8 244.7L587.4 240.7L586.6 236.7L586.3 232.7L586.6 228.6L587.4 224.6L588.7 220.6L590.5 216.7L592.8 212.9L595.6 209.1L599.0 205.4L602.8 201.9L607.0 198.5L611.7 195.2L616.8 192.1L622.3 189.1L628.2 186.4L634.4 183.8L641.0 181.5L647.9 179.3L655.0 177.4L662.3 175.8L669.9 174.3L677.6 173.2L685.5 172.2L693.4 171.6L701.5 171.2L709.5 171.0L717.6 171.2L725.6 171.6L733.6 172.2L741.5 173.1L749.2 174.3L756.8 175.7L764.1 177.4L771.3 179.3L778.1 181.4L784.7 183.7L791.0 186.3Z" fill="none" stroke="#2a0a48" stroke-opacity="0.9" stroke-width="1.15" stroke-linejoin="round"/>
<path d="M482.4 229.7L484.8 232.7L482.4 235.7L476.4 236.9L470.5 235.7L468.0 232.7L470.5 229.7L476.4 228.5ZM716.1 346.0L718.6 349.0L716.1 351.9L710.2 353.2L704.2 352.0L701.7 349.0L704.2 346.0L710.1 344.8ZM715.3 113.2L717.8 116.2L715.3 119.2L709.4 120.4L703.4 119.2L700.9 116.2L703.4 113.3L709.3 112.0ZM949.0 229.5L951.5 232.5L949.0 235.5L943.1 236.7L937.1 235.5L934.7 232.5L937.1 229.5L943.1 228.3Z" fill="none" stroke="#2a0a48" stroke-opacity="0.95" stroke-width="1.6" stroke-linejoin="round"/>
<g stroke-linecap="round"><path d="M380.4 389.3L380 372" stroke="#5a5ad0" stroke-width="0.9" stroke-opacity="0.8"/><path d="M379.9 362.3l-1.9 11.8h3.8z" fill="#3c3cc8"/><path d="M380.4 389.3L393 383.6" stroke="#d05050" stroke-width="0.9" stroke-opacity="0.85"/><path d="M402.6 379l-10.6 2.6 1.6 3.6z" fill="#e04040"/><path d="M380.4 389.3L368 383.8" stroke="#40c060" stroke-width="0.9" stroke-opacity="0.85"/><path d="M357.6 378.6l10.8 2.8 -1.7 3.6z" fill="#2cc850"/></g>
<rect x="1073.4" y="60" width="6.8" height="45.7" fill="#3c3c3a" />
<defs><linearGradient id="strip" x1="0" y1="0" x2="0" y2="1"><stop offset="0" stop-color="#3c3c3a"/><stop offset="0.33" stop-color="#4a4840"/><stop offset="0.38" stop-color="#b4a452"/><stop offset="0.6" stop-color="#a0a458"/><stop offset="0.68" stop-color="#5aa070"/><stop offset="0.88" stop-color="#3f9a7c"/><stop offset="0.93" stop-color="#3c3c3a"/></linearGradient></defs>
<rect x="1075.4" y="60.5" width="4.6" height="44.6" fill="url(#strip)" />
<rect x="1074.2" y="105.6" width="3.6" height="298.4" fill="#fdfdfd" />
<rect x="1078" y="105.6" width="1.3" height="298.4" fill="#6a5252" />
<defs><linearGradient id="fg1" x1="0" y1="0" x2="1" y2="0.4"><stop offset="0" stop-color="#eda03c"/><stop offset="1" stop-color="#f2c878"/></linearGradient><linearGradient id="fg2" x1="0" y1="0" x2="1" y2="0.6"><stop offset="0" stop-color="#f6c070"/><stop offset="1" stop-color="#fbe6a8"/></linearGradient></defs>
<defs><linearGradient id="fg3" x1="0" y1="0" x2="1" y2="0.5"><stop offset="0" stop-color="#f0b050"/><stop offset="0.6" stop-color="#f6d288"/></linearGradient><linearGradient id="fg4" x1="0" y1="0" x2="1" y2="0.6"><stop offset="0" stop-color="#f8d48c"/><stop offset="1" stop-color="#fcecb8"/></linearGradient></defs>
<g transform="translate(2.4 2.6)" ><path d="M0 3.5L11.4 0V8.7L0 12.2z" fill="#54548c"/><path d="M0 6.5L11.4 3.2M0 9.5L11.4 6M3.7 2.4V11.1M7.4 1.2V10" stroke="#9a9ac4" stroke-width="0.9" fill="none"/></g>
<rect x="3.9" y="37.8" width="1.7" height="1.7" fill="#4a4a4a"/>
<rect x="3.9" y="42.65" width="1.7" height="1.7" fill="#4a4a4a"/>
<rect x="3.9" y="47.5" width="1.7" height="1.7" fill="#4a4a4a"/>
<rect x="3.9" y="52.35" width="1.7" height="1.7" fill="#4a4a4a"/>
<g transform="translate(11 38)" ><path d="M2.5 2.5h8l3 3V15h-11z" fill="#f4f6f8" stroke="#a8b0b8" stroke-width="0.8"/><circle cx="3.8" cy="3.8" r="3.6" fill="#4cc04c"/><path d="M1.8 3.8h4M3.8 1.8v4" stroke="#fff" stroke-width="1.2"/></g>
<g transform="translate(15.7 46.8)" ><g transform="scale(0.89 0.86)"><ellipse cx="7" cy="2.8" rx="3.6" ry="2.8" fill="#2fbf2f"/><ellipse cx="7" cy="1.9" rx="2.6" ry="1.5" fill="#7be07b"/><path d="M0 5.2l3.4-1.8 3.6 1.6v3.4l-3.5 1.9-3.5-1.7z" fill="#1d2fd0"/><path d="M0.4 5.2l3-1.4 3 1.3-3 1.5z" fill="#6d7df0"/><path d="M7.4 5.6l3.3-1.6 3.3 1.6v3.1l-3.3 1.8-3.3-1.7z" fill="#d08a10"/><path d="M7.9 5.6l2.8-1.2 2.8 1.2-2.8 1.4z" fill="#f0c050"/></g></g>
<g transform="translate(33.8 39.5)" ><path d="M0 1.2q0-1.2 1.2-1.2h4l1.6 1.8h8q1.2 0 1.2 1.2v8.3q0 1.2-1.2 1.2H1.2q-1.2 0-1.2-1.2z" fill="url(#fg1)"/><path d="M0.8 3.6h14.3v6.9H0.8z" fill="url(#fg2)"/></g>
<g transform="translate(38.2 46.8)" ><g transform="scale(0.89 0.86)"><ellipse cx="7" cy="2.8" rx="3.6" ry="2.8" fill="#2fbf2f"/><ellipse cx="7" cy="1.9" rx="2.6" ry="1.5" fill="#7be07b"/><path d="M0 5.2l3.4-1.8 3.6 1.6v3.4l-3.5 1.9-3.5-1.7z" fill="#1d2fd0"/><path d="M0.4 5.2l3-1.4 3 1.3-3 1.5z" fill="#6d7df0"/><path d="M7.4 5.6l3.3-1.6 3.3 1.6v3.1l-3.3 1.8-3.3-1.7z" fill="#d08a10"/><path d="M7.9 5.6l2.8-1.2 2.8 1.2-2.8 1.4z" fill="#f0c050"/></g></g>
<g transform="translate(55 38.5)" ><path d="M0.5 0.5h12.5l2 2V15H0.5z" fill="#4a5aa0"/><path d="M3 1h8.5v5H3z" fill="#dfe4f4"/><path d="M3.5 9.5h8V15h-8z" fill="#8a96c8"/></g>
<g transform="translate(60.4 46.8)" ><g transform="scale(0.89 0.86)"><ellipse cx="7" cy="2.8" rx="3.6" ry="2.8" fill="#2fbf2f"/><ellipse cx="7" cy="1.9" rx="2.6" ry="1.5" fill="#7be07b"/><path d="M0 5.2l3.4-1.8 3.6 1.6v3.4l-3.5 1.9-3.5-1.7z" fill="#1d2fd0"/><path d="M0.4 5.2l3-1.4 3 1.3-3 1.5z" fill="#6d7df0"/><path d="M7.4 5.6l3.3-1.6 3.3 1.6v3.1l-3.3 1.8-3.3-1.7z" fill="#d08a10"/><path d="M7.9 5.6l2.8-1.2 2.8 1.2-2.8 1.4z" fill="#f0c050"/></g></g>
<g transform="translate(77 38.5)" ><path d="M0.5 6.5L7 0.8l0.4 3L13 1.2l1.6 3.4L8.8 7.5l1.6 2.8z" fill="#2eb03a"/></g>
<g transform="translate(85.6 44.2)" ><path d="M0 3.5L9.6 0V6.9L0 10.4z" fill="#2c3688"/><path d="M0 6.5L9.6 3.2M0 9.5L9.6 6M3.7 2.4V9.3M7.4 1.2V8.2" stroke="#8890d0" stroke-width="0.9" fill="none"/></g>
<path d="M99.6 46.5h3.8l-1.9 2.3z" fill="#1a1a1a"/>
<g transform="translate(107.4 37.8)" ><path d="M13.4 0.6L5.6 1l2.2 2L0.6 8l2.8 3.2 6.8-5.2 2 2.4z" fill="#e03434"/></g>
<g transform="translate(115.8 44.4)" ><path d="M0 3.5L9.6 0V6.9L0 10.4z" fill="#2c3688"/><path d="M0 6.5L9.6 3.2M0 9.5L9.6 6M3.7 2.4V9.3M7.4 1.2V8.2" stroke="#8890d0" stroke-width="0.9" fill="none"/></g>
<path d="M129.6 46.5h3.8l-1.9 2.3z" fill="#1a1a1a"/>
<line x1="138.5" y1="39" x2="138.5" y2="55" stroke="#bcbcbc" stroke-width="1"/>
<g transform="translate(147 38)" ><circle cx="7.5" cy="4.6" r="3.6" fill="#e8b088"/><path d="M3.8 3.8q3.6-5.5 7.4 0q-3-1.6-7.4 0z" fill="#6a3a1a"/><path d="M0.5 17q0-7.5 7-7.5t7 7.5z" fill="#2a9a3a"/><path d="M5.6 9.8l1.9 3 1.9-3z" fill="#e8f4e8"/></g>
<g transform="translate(168 39)" ><path d="M0 1.2q0-1.2 1.2-1.2h4l1.6 1.8h6.5q1.2 0 1.2 1.2v9.8q0 1.2-1.2 1.2H1.2q-1.2 0-1.2-1.2z" fill="url(#fg1)"/><path d="M0.8 3.6h12.8v8.4H0.8z" fill="url(#fg2)"/></g>
<g transform="translate(175.4 43.6)" ><rect x="0" y="3" width="3" height="8" fill="#2040d0"/><rect x="3" y="1.5" width="3" height="9.5" fill="#30b040"/><rect x="6" y="0" width="2.6" height="11" fill="#e8d030"/><rect x="8.6" y="1" width="2.4" height="10" fill="#e04030"/></g>
<path d="M189.6 46.5h3.8l-1.9 2.3z" fill="#1a1a1a"/>
<rect x="201" y="37.8" width="1.7" height="1.7" fill="#4a4a4a"/>
<rect x="201" y="42.65" width="1.7" height="1.7" fill="#4a4a4a"/>
<rect x="201" y="47.5" width="1.7" height="1.7" fill="#4a4a4a"/>
<rect x="201" y="52.35" width="1.7" height="1.7" fill="#4a4a4a"/>
<g transform="translate(208 38.5)" ><circle cx="6.2" cy="6.6" r="5.1" fill="#a6a6c2" stroke="#8a8aa8" stroke-width="1.2"/><path d="M6.2 3v7.2M2.6 6.6h7.2M3.7 4.1l5 5M8.7 4.1l-5 5" stroke="#f0f0f8" stroke-width="0.9"/><circle cx="6.2" cy="6.6" r="1.2" fill="#8a8aa8"/><path d="M10.2 10.6l4.2 4.2" stroke="#9090a8" stroke-width="2.6" stroke-linecap="round"/></g>
<g transform="translate(232 39)" ><path d="M0.5 7.5L7.6 0.8v3.6h6.2v6.2H7.6v3.6z" fill="#aaaae2" stroke="#8484c4" stroke-width="0.9" stroke-linejoin="round"/></g>
<g transform="translate(253 38.5)" ><path d="M2.5 15V4" stroke="#2aa83a" stroke-width="1.6" fill="none"/><path d="M-0.1 5.2L2.5 0.6l2.6 4.6z" fill="#2aa83a"/><path d="M2.5 15H13.8" stroke="#e04040" stroke-width="1.6" fill="none"/><path d="M13.8 12.6L17 15L13.8 17.4z" fill="#e04040"/></g>
<g transform="translate(275 38.5)" ><path d="M2.5 3V13" stroke="#2aa83a" stroke-width="1.6" fill="none"/><path d="M-0.1 12L2.5 16.8l2.6-4.8z" fill="#2aa83a"/><path d="M2.5 3H13.8" stroke="#e04040" stroke-width="1.6" fill="none"/><path d="M13.8 0.6L17 3L13.8 5.4z" fill="#e04040"/></g>
<g transform="translate(297 38.5)" ><path d="M2.5 15V4" stroke="#3040c8" stroke-width="1.6" fill="none"/><path d="M-0.1 5.2L2.5 0.6l2.6 4.6z" fill="#3040c8"/><path d="M2.5 15H13.8" stroke="#e04040" stroke-width="1.6" fill="none"/><path d="M13.8 12.6L17 15L13.8 17.4z" fill="#e04040"/></g>
<g transform="translate(319 38.5)" ><path d="M15.5 15V4" stroke="#3040c8" stroke-width="1.6" fill="none"/><path d="M12.9 5.2L15.5 0.6l2.6 4.6z" fill="#3040c8"/><path d="M15.5 15H4.2" stroke="#e04040" stroke-width="1.6" fill="none"/><path d="M4.2 12.6L1 15L4.2 17.4z" fill="#e04040"/></g>
<g transform="translate(341 38.5)" ><path d="M2.5 15V4" stroke="#3040c8" stroke-width="1.6" fill="none"/><path d="M-0.1 5.2L2.5 0.6l2.6 4.6z" fill="#3040c8"/><path d="M2.5 15H13.8" stroke="#2aa83a" stroke-width="1.6" fill="none"/><path d="M13.8 12.6L17 15L13.8 17.4z" fill="#2aa83a"/></g>
<g transform="translate(363 38.5)" ><path d="M15.5 15V4" stroke="#3040c8" stroke-width="1.6" fill="none"/><path d="M12.9 5.2L15.5 0.6l2.6 4.6z" fill="#3040c8"/><path d="M15.5 15H4.2" stroke="#2aa83a" stroke-width="1.6" fill="none"/><path d="M4.2 12.6L1 15L4.2 17.4z" fill="#2aa83a"/></g>
<g transform="translate(385 38.5)" ><path d="M8.9 15.6V4.2" stroke="#3040c8" stroke-width="1.5"/><path d="M8.9 15.6L1.6 10.8" stroke="#2aa83a" stroke-width="2"/><path d="M8.9 15.6l7.4-4.8" stroke="#e04040" stroke-width="2"/><path d="M0.6 10l3.6 0.4-1.6 2.4z" fill="#2aa83a"/><path d="M17.3 10l-3.6 0.4 1.6 2.4z" fill="#e04040"/></g>
<g transform="translate(408 39)" ><path d="M0.5 0.5L12 3v11L0.5 11z" fill="#3a6ac8"/><path d="M2 2.5l8.5 2v7.5L2 9.8z" fill="#7aa4e8"/><path d="M8 13l2.5 2.8L17 10.5" stroke="#e02020" stroke-width="2.2" fill="none"/></g>
<rect x="433" y="37.8" width="1.7" height="1.7" fill="#4a4a4a"/>
<rect x="433" y="42.65" width="1.7" height="1.7" fill="#4a4a4a"/>
<rect x="433" y="47.5" width="1.7" height="1.7" fill="#4a4a4a"/>
<rect x="433" y="52.35" width="1.7" height="1.7" fill="#4a4a4a"/>
<g transform="translate(441 38.5)" ><circle cx="8.2" cy="8.4" r="4.5" fill="#d2d2ee" stroke="#8c8ca6" stroke-width="1.5"/><path d="M11.6 11.8l3.6 3.4" stroke="#8c8ca6" stroke-width="2.6" stroke-linecap="round"/><path d="M0 15.2h3.6M1.8 13.4v3.6M11.6 1.8h4" stroke="#222" stroke-width="1.1"/></g>
<g transform="translate(463 38.5)" ><circle cx="8" cy="8" r="7.4" fill="none" stroke="#8a8a98" stroke-width="0.9" stroke-dasharray="1.6 1.4"/><circle cx="8.2" cy="8.2" r="4.3" fill="#d2d2ee" stroke="#8c8ca6" stroke-width="1.5"/><path d="M11.6 11.6l3.6 3.4" stroke="#8c8ca6" stroke-width="2.6" stroke-linecap="round"/></g>
<g transform="translate(486.5 39.3)" ><path d="M6 0.6q1.4 7 -0.2 14.4M0.6 7.2q5.6-1.6 11 0.2" stroke="#5a62a0" stroke-width="1.5" fill="none" stroke-linecap="round"/><path d="M3.8 12.4l2 3.2 2-3.4z" fill="#5a62a0"/><path d="M9.6 5.2l2.6 2.2-3 1.4z" fill="#5a62a0"/></g>
<g transform="translate(508 38.5)" ><path d="M4 16.5q-1-3-3.2-5.6-0.8-1.4 0.4-1.8 1.2-0.2 2.6 1.8V3.4q0.2-1.2 1.2-1.2t1.1 1.2V2q0.2-1.3 1.3-1.3T8.6 2v1q0.2-1.1 1.2-1.1T11 3v1.4q0.3-1 1.1-1t1.1 1v6.8q-0.2 3-1.8 5.3z" fill="#fcfcfc" stroke="#555" stroke-width="0.9" stroke-linejoin="round"/><path d="M6.1 3.5v5M8.6 3v5.5M11 4.2v4.3" stroke="#777" stroke-width="0.7"/></g>
<defs><linearGradient id="hag" x1="0" y1="0" x2="1" y2="0"><stop offset="0" stop-color="#a8a8e0"/><stop offset="1" stop-color="#4040a8"/></linearGradient><linearGradient id="vag" x1="0" y1="0" x2="0" y2="1"><stop offset="0" stop-color="#a8a8e0"/><stop offset="1" stop-color="#4848ac"/></linearGradient></defs>
<g transform="translate(529 43.2)" ><path d="M0.3 3.4L4.6 0.6v1.8h4V0l8 3.4-8 3.4V4.4h-4v1.8z" fill="url(#hag)"/></g>
<g transform="translate(555 38.6)" ><path d="M4.6 0.2L8.6 5H6.2v6h2.8L4.6 16.4 0.2 11h2.6V5H0.6z" fill="url(#vag)"/></g>
<g transform="translate(574 38.3)" ><path d="M5.6 1.5q-5 7 0 14.5" stroke="#5c64b4" stroke-width="2.8" fill="none"/><path d="M10.8 1.5q5 7 0 14.5" stroke="#5c64b4" stroke-width="2.8" fill="none"/><path d="M3.2 0.2l4.6 0.4-1.8 3.8z M13.2 17.2l-4.6-0.4 1.8-3.8z" fill="#444a9c"/></g>
<rect x="598.4" y="37.8" width="1.7" height="1.7" fill="#4a4a4a"/>
<rect x="598.4" y="42.65" width="1.7" height="1.7" fill="#4a4a4a"/>
<rect x="598.4" y="47.5" width="1.7" height="1.7" fill="#4a4a4a"/>
<rect x="598.4" y="52.35" width="1.7" height="1.7" fill="#4a4a4a"/>
<g transform="translate(605.6 40.2)" ><path d="M0.6 10.8L1.8 3.4L4 5.2Q9-1.2 17.6 5.6Q10.5 3 6.4 7.4L8.4 9.2z" fill="#7a80c6" stroke="#666cb4" stroke-width="0.6" stroke-linejoin="round"/></g>
<path d="M627.1 45.8h3.8l-1.9 2.3z" fill="#1a1a1a"/>
<g transform="translate(635.4 40.2)" ><path d="M17.4 10.8L16.2 3.4L14 5.2Q9-1.2 0.4 5.6Q7.5 3 11.6 7.4L9.6 9.2z" fill="#e0e0ea" stroke="#d8d8e2" stroke-width="0.6" stroke-linejoin="round"/></g>
<path d="M656.4 45.6h4.6l-2.3 2.6z" fill="#d0d0d0"/>
<rect x="668.4" y="37.8" width="1.7" height="1.7" fill="#4a4a4a"/>
<rect x="668.4" y="42.65" width="1.7" height="1.7" fill="#4a4a4a"/>
<rect x="668.4" y="47.5" width="1.7" height="1.7" fill="#4a4a4a"/>
<rect x="668.4" y="52.35" width="1.7" height="1.7" fill="#4a4a4a"/>
<g transform="translate(678.4 38.5)" ><path d="M3 0.9q0-0.9 0.9-0.9h5q0.9 0 0.9 0.9v0.5h4q1 0 1 1v6q0 1-1 1H1q-1 0-1-1v-6q0-1 1-1h2z" fill="#7676ac"/><path d="M0.5 2h14v1.6H0.5z" fill="#a0a0d0" opacity="0.85"/><path d="M0 6.8h14.8v1.6q0 1-1 1H1q-1 0-1-1z" fill="#5e5e9a"/><circle cx="10.6" cy="5.6" r="2.7" fill="#4c4c90"/><circle cx="10.6" cy="5.6" r="1.3" fill="#f0f0ff"/></g>
<g transform="translate(676 46.5)" ><path d="M0.5 0.5h9l1.5 1.5v8H0.5z" fill="#3a4a98"/><path d="M2.5 1h5.5v3.2H2.5z" fill="#e8ecf8"/><path d="M3 6.4h5v3.4H3z" fill="#b0b8e0"/></g>
<g transform="translate(700.4 38.5)" ><path d="M3 0.9q0-0.9 0.9-0.9h5q0.9 0 0.9 0.9v0.5h4q1 0 1 1v6q0 1-1 1H1q-1 0-1-1v-6q0-1 1-1h2z" fill="#7676ac"/><path d="M0.5 2h14v1.6H0.5z" fill="#a0a0d0" opacity="0.85"/><path d="M0 6.8h14.8v1.6q0 1-1 1H1q-1 0-1-1z" fill="#5e5e9a"/><circle cx="10.6" cy="5.6" r="2.7" fill="#4c4c90"/><circle cx="10.6" cy="5.6" r="1.3" fill="#f0f0ff"/></g>
<g transform="translate(698 45.5)" ><path d="M0.5 0.5h12.5v10.5H0.5z" fill="#c8ccdc" stroke="#6a6a7a" stroke-width="1"/></g>
<g transform="translate(722.4 38.5)" ><path d="M3 0.9q0-0.9 0.9-0.9h5q0.9 0 0.9 0.9v0.5h4q1 0 1 1v6q0 1-1 1H1q-1 0-1-1v-6q0-1 1-1h2z" fill="#7676ac"/><path d="M0.5 2h14v1.6H0.5z" fill="#a0a0d0" opacity="0.85"/><path d="M0 6.8h14.8v1.6q0 1-1 1H1q-1 0-1-1z" fill="#5e5e9a"/><circle cx="10.6" cy="5.6" r="2.7" fill="#4c4c90"/><circle cx="10.6" cy="5.6" r="1.3" fill="#f0f0ff"/></g>
<g transform="translate(720 49.5)" ><path d="M0.5 0.5h13v6.5H0.5z" fill="#c8ccdc" stroke="#555" stroke-width="1.2"/></g>
<g transform="translate(744.4 38.5)" ><path d="M3 0.9q0-0.9 0.9-0.9h5q0.9 0 0.9 0.9v0.5h4q1 0 1 1v6q0 1-1 1H1q-1 0-1-1v-6q0-1 1-1h2z" fill="#7676ac"/><path d="M0.5 2h14v1.6H0.5z" fill="#a0a0d0" opacity="0.85"/><path d="M0 6.8h14.8v1.6q0 1-1 1H1q-1 0-1-1z" fill="#5e5e9a"/><circle cx="10.6" cy="5.6" r="2.7" fill="#4c4c90"/><circle cx="10.6" cy="5.6" r="1.3" fill="#f0f0ff"/></g>
<g transform="translate(742 46)" ><path d="M0.5 0.5h12.5v10.5H0.5z" fill="none" stroke="#333" stroke-width="1" stroke-dasharray="1.6 1.4"/></g>
<g transform="translate(766.4 38.5)" ><path d="M3 0.9q0-0.9 0.9-0.9h5q0.9 0 0.9 0.9v0.5h4q1 0 1 1v6q0 1-1 1H1q-1 0-1-1v-6q0-1 1-1h2z" fill="#7676ac"/><path d="M0.5 2h14v1.6H0.5z" fill="#a0a0d0" opacity="0.85"/><path d="M0 6.8h14.8v1.6q0 1-1 1H1q-1 0-1-1z" fill="#5e5e9a"/><circle cx="10.6" cy="5.6" r="2.7" fill="#4c4c90"/><circle cx="10.6" cy="5.6" r="1.3" fill="#f0f0ff"/></g>
<g transform="translate(764 45.5)" ><path d="M0.5 0.5h12.5v10.5H0.5z" fill="#d8dae4" stroke="#444" stroke-width="1"/><path d="M3 4h9v6H3z" fill="#2a3a78" stroke="#111" stroke-width="0.8"/></g>
<line x1="788.5" y1="39" x2="788.5" y2="55" stroke="#bcbcbc" stroke-width="1"/>
<g transform="translate(796.6 38.5)" ><path d="M3 0.9q0-0.9 0.9-0.9h5q0.9 0 0.9 0.9v0.5h4q1 0 1 1v6q0 1-1 1H1q-1 0-1-1v-6q0-1 1-1h2z" fill="#7676ac"/><path d="M0.5 2h14v1.6H0.5z" fill="#a0a0d0" opacity="0.85"/><path d="M0 6.8h14.8v1.6q0 1-1 1H1q-1 0-1-1z" fill="#5e5e9a"/><circle cx="10.6" cy="5.6" r="2.7" fill="#4c4c90"/><circle cx="10.6" cy="5.6" r="1.3" fill="#f0f0ff"/></g>
<g transform="translate(794 46)" ><path d="M0.5 0.5h12.5v10.5H0.5z" fill="#d8ecf8" stroke="#8a9ab0" stroke-width="0.9"/><path d="M1 8l3.5-3.5 3 2.6 2.4-1.6 2.6 2.5v2.5H1z" fill="#7ac070"/><circle cx="9.8" cy="3.4" r="1.3" fill="#f0d050"/></g>
<rect x="820.4" y="37.8" width="1.7" height="1.7" fill="#4a4a4a"/>
<rect x="820.4" y="42.65" width="1.7" height="1.7" fill="#4a4a4a"/>
<rect x="820.4" y="47.5" width="1.7" height="1.7" fill="#4a4a4a"/>
<rect x="820.4" y="52.35" width="1.7" height="1.7" fill="#4a4a4a"/>
<g transform="translate(826 40)" ><path d="M3 11.5L17 3" stroke="#333" stroke-width="1.2" stroke-dasharray="2.4 1.2"/><circle cx="3.2" cy="11.5" r="2.8" fill="#e8d820"/><circle cx="10" cy="7.3" r="2.4" fill="#e8d820"/><circle cx="17" cy="3.2" r="2.8" fill="#e8d820"/></g>
<g transform="translate(850 40)" ><path d="M2.5 12.5L15.5 3.5" stroke="#8890c8" stroke-width="5.4" stroke-linecap="round"/><path d="M3 11.3L15 3" stroke="#b4bae4" stroke-width="1.6" stroke-linecap="round"/></g>
<g transform="translate(874 38.3)" ><rect x="3.4" y="0.6" width="6.6" height="3.6" rx="1.2" fill="#5c5c9c"/><rect x="4.2" y="1" width="5" height="1.2" rx="0.6" fill="#8c8cc4"/><path d="M1 5.4q0-1.6 1.6-1.6h8.2q1.6 0 1.6 1.6v9.2q0 1.6-1.6 1.6H2.6q-1.6 0-1.6-1.6z" fill="#6c6cac"/><path d="M3.6 4.4h3.2v11.4H3.6z" fill="#9c9cd4"/><path d="M1.2 7.5h11M1.2 10h11M1.2 12.5h11" stroke="#5a5a9a" stroke-width="0.5" opacity="0.7"/></g>
<g transform="translate(893.5 38.2)" ><path d="M9 0.6l8 4.2-8 4.2-8-4.2z" fill="#ffffff"/><path d="M1 4.8l8 4.2v8.4l-8-4.2z" fill="#ffffff"/><path d="M17 4.8l-8 4.2v8.4l8-4.2z" fill="#ffffff"/><path d="M9 0.6l8 4.2v8.4l-8 4.2-8-4.2V4.8zM1 4.8l8 4.2 8-4.2M9 9v8.4" fill="none" stroke="#4a4a4a" stroke-width="1" stroke-linejoin="round"/><path d="M1 4.8v8.4" stroke="#e02020" stroke-width="2"/></g>
<g transform="translate(915.5 38.2)" ><path d="M9 0.6l8 4.2-8 4.2-8-4.2z" fill="#ffffff"/><path d="M1 4.8l8 4.2v8.4l-8-4.2z" fill="#ffffff"/><path d="M17 4.8l-8 4.2v8.4l8-4.2z" fill="#ffffff"/><path d="M9 0.6l8 4.2v8.4l-8 4.2-8-4.2V4.8zM1 4.8l8 4.2 8-4.2M9 9v8.4" fill="none" stroke="#555" stroke-width="1" stroke-linejoin="round"/><path d="M9 0.6v8.4M1 13.2l8-4.2 8 4.2" fill="none" stroke="#888" stroke-width="0.8"/></g>
<g transform="translate(937.5 38.2)" ><path d="M9 0.6l8 4.2-8 4.2-8-4.2z" fill="#9aa0e0"/><path d="M1 4.8l8 4.2v8.4l-8-4.2z" fill="#ffffff"/><path d="M17 4.8l-8 4.2v8.4l8-4.2z" fill="#ffffff"/><path d="M9 0.6l8 4.2v8.4l-8 4.2-8-4.2V4.8zM1 4.8l8 4.2 8-4.2M9 9v8.4" fill="none" stroke="#4a4a4a" stroke-width="1" stroke-linejoin="round"/></g>
<g transform="translate(960.5 39)" ><path d="M0 3.5L12.5 0V9.5L0 13z" fill="#34387c"/><path d="M0 6.5L12.5 3.2M0 9.5L12.5 6M3.7 2.4V11.9M7.4 1.2V10.8" stroke="#9088c4" stroke-width="0.9" fill="none"/><path d="M9.4 7.6q0.6 4 4 4.6v-1.9l4.2 3.5-4.2 3.3v-1.9q-6-0.6-6.6-7z" fill="#e02020"/></g>
<g transform="translate(983.4 38.8)" ><path d="M0 4L5.6 1v13.4L0 16z" fill="#34387c"/><path d="M13.6 4.4L8.4 1.4v13l5.2 1.6z" fill="#a888b8"/><path d="M5.6 0.4h2.8v16.8H5.6z" fill="#f08aa4"/><path d="M0 8l5.6-2M0 12l5.6-2M2.8 2.5v12.5" stroke="#9088c4" stroke-width="0.8"/><path d="M8.4 6l5.2 2M8.4 10l5.2 2M11 2.9v12.1" stroke="#e8c0d8" stroke-width="0.8"/></g>
<g transform="translate(1005 39)" ><path d="M0 3.5L12.5 0V9.5L0 13z" fill="#34387c"/><path d="M0 6.5L12.5 3.2M0 9.5L12.5 6M3.7 2.4V11.9M7.4 1.2V10.8" stroke="#9088c4" stroke-width="0.9" fill="none"/><path d="M6.4 10.4l3.4 3.8L17.6 8" stroke="#e02020" stroke-width="2.6" fill="none"/></g>
<line x1="1028" y1="39" x2="1028" y2="55" stroke="#bcbcbc" stroke-width="1"/>
<circle cx="1038.3" cy="41.4" r="3" fill="#2832c8"/><path d="M1037.4 40.4q1-1.2 1.9 0-0.1 0.8-0.9 1.4" stroke="#dfe0ff" stroke-width="0.7" fill="none"/>
<circle cx="1061" cy="41.4" r="3" fill="#2832c8"/><path d="M1060.1 40.4q1-1.2 1.9 0-0.1 0.8-0.9 1.4" stroke="#dfe0ff" stroke-width="0.7" fill="none"/>
<path d="M1072 45.4v6" stroke="#e02020" stroke-width="1.8"/><circle cx="1072" cy="54" r="1.1" fill="#e02020"/>
<rect x="320.4" y="65.5" width="1.7" height="1.7" fill="#4a4a4a"/>
<rect x="325.3" y="65.5" width="1.7" height="1.7" fill="#4a4a4a"/>
<rect x="330.2" y="65.5" width="1.7" height="1.7" fill="#4a4a4a"/>
<rect x="335.1" y="65.5" width="1.7" height="1.7" fill="#4a4a4a"/>
<g transform="translate(323 72.5)" ><path d="M0 5L13 0V11L0 16z" fill="#30347e"/><path d="M0 8.7L13 3.7M0 12.4L13 7.4M4.3 3.4v11M8.6 1.7v11" stroke="#a4a4d8" stroke-width="0.9" fill="none"/></g>
<g transform="translate(321 78.5)" ><rect x="0.7" y="0.7" width="11.6" height="10.8" fill="#fbf0f0" stroke="#e06464" stroke-width="1.25"/><path d="M3 3h5v5H3z" fill="#fff" stroke="#c8c8d8" stroke-width="0.6"/></g>
<g transform="translate(323 95.5)" ><path d="M0 5L13 0V11L0 16z" fill="#30347e"/><path d="M0 8.7L13 3.7M0 12.4L13 7.4M4.3 3.4v11M8.6 1.7v11" stroke="#a4a4d8" stroke-width="0.9" fill="none"/></g>
<g transform="translate(323 104.5)" ><path d="M0 0h9v6H0z" fill="#f4f4fa" opacity="0.9"/><path d="M5 3.4l4.6-0.4 0.4-3 4.6 3.4-5 4 0-2.2z" fill="#e02020"/></g>
<g transform="translate(323 117.5)" ><path d="M0 5L13 0V11L0 16z" fill="#30347e"/><path d="M0 8.7L13 3.7M0 12.4L13 7.4M4.3 3.4v11M8.6 1.7v11" stroke="#a4a4d8" stroke-width="0.9" fill="none"/></g>
<g transform="translate(328 124.5)" ><path d="M0 1.5L8 -1.5v8L0 10z" fill="#f2f2fa" stroke="#aab" stroke-width="0.5"/></g>
<g transform="translate(323 139.5)" ><path d="M0 5L13 0V11L0 16z" fill="#30347e"/><path d="M0 8.7L13 3.7M0 12.4L13 7.4M4.3 3.4v11M8.6 1.7v11" stroke="#a4a4d8" stroke-width="0.9" fill="none"/></g>
<g transform="translate(323 161.5)" ><path d="M0 5L13 0V11L0 16z" fill="#7a88c8"/><path d="M0 8.7L13 3.7M0 12.4L13 7.4M4.3 3.4v11M8.6 1.7v11" stroke="#c0c8ee" stroke-width="0.9" fill="none"/></g>
<g transform="translate(321 167.5)" ><rect x="0.7" y="0.7" width="11.2" height="10.6" fill="#30347e" stroke="#e04040" stroke-width="1.4"/><path d="M0.7 6h11M6.3 0.7v10.6" stroke="#8a96d8" stroke-width="0.8"/></g>
<circle cx="329.2" cy="192.2" r="8" fill="#fbe4e4" stroke="#e04848" stroke-width="1.3"/>
<g transform="translate(324.4 186.2)" ><path d="M0 3.4L10 0V9L0 12.4z" fill="#30347e"/><path d="M0 7.8L10 4.4M3.4 2.2v9M6.8 1v9" stroke="#8a96d8" stroke-width="0.8"/></g>
<g transform="translate(321 206.5)" ><path d="M1 8.5L4.5 1.5q1-1.6 2.6-0.6L9 2.2 6.2 10z" fill="#3a4266"/><path d="M16 8.5L12.5 1.5q-1-1.6-2.6-0.6L8 2.2l2.8 7.8z" fill="#4a5276"/><ellipse cx="3.8" cy="10.6" rx="3.6" ry="3.4" fill="#2a3050"/><ellipse cx="13.4" cy="10.6" rx="3.6" ry="3.4" fill="#2a3050"/><ellipse cx="3.8" cy="11" rx="2" ry="1.8" fill="#8a94c0"/><ellipse cx="13.4" cy="11" rx="2" ry="1.8" fill="#8a94c0"/></g>
<circle cx="326.2" cy="231.8" r="3.7" fill="#2030c8"/>
<g transform="translate(321 250)" ><path d="M2 15.5L15.5 8" stroke="#3a4a90" stroke-width="1.6"/><path d="M2 7v9M15.5 0v9" stroke="#333" stroke-width="1"/></g>
<defs><linearGradient id="hl270" x1="0" y1="0" x2="0" y2="1"><stop offset="0" stop-color="#fbd9a4"/><stop offset="1" stop-color="#f6a04a"/></linearGradient></defs>
<rect x="318.4" y="270.3" width="21" height="21.4" fill="url(#hl270)" stroke="#c8a070" stroke-width="0.9"/>
<g transform="translate(321 272.5)" ><path d="M0 1.8L8 0v7L0 9z" fill="#3a4aa8"/><path d="M0 5.4L8 3.6M4 0.9v7.2" stroke="#a0aae0" stroke-width="0.8"/></g>
<defs><linearGradient id="hl292" x1="0" y1="0" x2="0" y2="1"><stop offset="0" stop-color="#fbd9a4"/><stop offset="1" stop-color="#f6a04a"/></linearGradient></defs>
<rect x="318.4" y="292.6" width="21" height="21.4" fill="url(#hl292)" stroke="#c8a070" stroke-width="0.9"/>
<g transform="translate(321 294)" ><path d="M2.5 0.5v10" stroke="#d02020" stroke-width="1.5"/><circle cx="2.5" cy="5" r="1.7" fill="#b01010"/><circle cx="2.5" cy="10.5" r="1.6" fill="#222"/></g>
<g transform="translate(321 316.5)" ><path d="M0 4.5L9 2.5v6.5L0 11z" fill="#5a6ac8" stroke="#2a3a98" stroke-width="0.8"/><path d="M7 11.5l9-2V16l-9 2z" fill="#7a8ad8" stroke="#2a3a98" stroke-width="0.8"/><path d="M4 0v7M4 0L2.3 3M4 0l1.7 3" stroke="#d01010" stroke-width="1.5" fill="none"/><path d="M13 18.5v-7" stroke="#d01010" stroke-width="1.5"/><circle cx="13" cy="18" r="1.4" fill="#d01010"/><path d="M11 3.5h4M11 6h3" stroke="#2a3a98" stroke-width="0.9"/></g>
<g transform="translate(321 341)" ><path d="M3 4L14.5 2V13L2 15.5z" fill="#4a78e0" stroke="#1a2a78" stroke-width="1"/><circle cx="3" cy="4" r="1.5" fill="#ddd" stroke="#333" stroke-width="0.7"/><circle cx="14.5" cy="2" r="1.5" fill="#ddd" stroke="#333" stroke-width="0.7"/><circle cx="14.5" cy="13" r="1.5" fill="#ddd" stroke="#333" stroke-width="0.7"/><circle cx="2" cy="15.5" r="1.5" fill="#ddd" stroke="#333" stroke-width="0.7"/></g>
<rect x="317.5" y="408.2" width="1.7" height="1.7" fill="#4a4a4a"/>
<rect x="317.5" y="413" width="1.7" height="1.7" fill="#4a4a4a"/>
<rect x="317.5" y="417.8" width="1.7" height="1.7" fill="#4a4a4a"/>
<rect x="317.5" y="422.6" width="1.7" height="1.7" fill="#4a4a4a"/>
<g transform="translate(325.6 409)" ><path d="M7.7 0.6l2.2 4.9 5.3 0.6-3.9 3.6 1.1 5.3-4.7-2.7-4.7 2.7 1.1-5.3-3.9-3.6 5.3-0.6z" fill="#ecc41c" stroke="#b8900c" stroke-width="1.2" stroke-linejoin="round"/><path d="M7.7 3.2l1.4 3.2 3.2 0.4-6.6 1.5z" fill="#fbe678" opacity="0.85"/></g>
<rect x="350.4" y="408.2" width="1.7" height="1.7" fill="#4a4a4a"/>
<rect x="350.4" y="413" width="1.7" height="1.7" fill="#4a4a4a"/>
<rect x="350.4" y="417.8" width="1.7" height="1.7" fill="#4a4a4a"/>
<rect x="350.4" y="422.6" width="1.7" height="1.7" fill="#4a4a4a"/>
<g transform="translate(357.3 408.6)" ><path d="M0 1.2q0-1.2 1.2-1.2h4l1.6 1.8h5.5q1.2 0 1.2 1.2v7.3q0 1.2-1.2 1.2H1.2q-1.2 0-1.2-1.2z" fill="url(#fg3)"/><path d="M0.8 3.6h11.8v5.9H0.8z" fill="url(#fg4)"/></g>
<g transform="translate(357.8 414.6)" ><g transform="scale(1.2 1.12)"><ellipse cx="7" cy="2.8" rx="3.6" ry="2.8" fill="#2fbf2f"/><ellipse cx="7" cy="1.9" rx="2.6" ry="1.5" fill="#7be07b"/><path d="M0 5.2l3.4-1.8 3.6 1.6v3.4l-3.5 1.9-3.5-1.7z" fill="#1d2fd0"/><path d="M0.4 5.2l3-1.4 3 1.3-3 1.5z" fill="#6d7df0"/><path d="M7.4 5.6l3.3-1.6 3.3 1.6v3.1l-3.3 1.8-3.3-1.7z" fill="#d08a10"/><path d="M7.9 5.6l2.8-1.2 2.8 1.2-2.8 1.4z" fill="#f0c050"/></g></g>
<g transform="translate(379 408.6)" ><path d="M0 1.2q0-1.2 1.2-1.2h4l1.6 1.8h5.5q1.2 0 1.2 1.2v7.3q0 1.2-1.2 1.2H1.2q-1.2 0-1.2-1.2z" fill="url(#fg3)"/><path d="M0.8 3.6h11.8v5.9H0.8z" fill="url(#fg4)"/></g>
<g transform="translate(382 415)" ><path d="M0 4.6L7 1.4l7 3.2v3.4l-7 3.4-7-3.4z" fill="#1424b8"/><path d="M0.6 4.6L7 1.8l6.4 2.8L7 7.4z" fill="#4a5af0"/></g>
<g transform="translate(401 408.6)" ><path d="M0 1.2q0-1.2 1.2-1.2h4l1.6 1.8h5.5q1.2 0 1.2 1.2v7.3q0 1.2-1.2 1.2H1.2q-1.2 0-1.2-1.2z" fill="url(#fg3)"/><path d="M0.8 3.6h11.8v5.9H0.8z" fill="url(#fg4)"/></g>
<g transform="translate(405.4 413.6)" ><path d="M4.2 1h8v4h-8z" fill="#fdf6e8" opacity="0.8"/><path d="M1 0.5v10.8h11.4" stroke="#2a2a2a" stroke-width="1.3" fill="none"/><path d="M2.6 10.6q2-0.6 2.6-5.4 0.5-4.2 1.5-0.4 0.4 5 1.4 5.8M5 2.2h5.4M8.8 2.4q-0.6 6 1.8 8.2" stroke="#981818" stroke-width="1.3" fill="none"/></g>
<g transform="translate(424 408.5)" ><path d="M0 1.2q0-1.2 1.2-1.2h4l1.6 1.8h5.5q1.2 0 1.2 1.2v7.3q0 1.2-1.2 1.2H1.2q-1.2 0-1.2-1.2z" fill="url(#fg3)"/><path d="M0.8 3.6h11.8v5.9H0.8z" fill="url(#fg4)"/></g>
<g transform="translate(427.5 414.5)" ><path d="M0 4.6L7 1.4l7 3.2v3.6l-7 3.4-7-3.4z" fill="#4e5462"/><path d="M0.6 4.6L7 1.8l6.4 2.8L7 7.4z" fill="#a0a4b0"/></g>
<path d="M425.3 413v10" stroke="#d02020" stroke-width="1.2" stroke-dasharray="2 1.2"/>
<g transform="translate(445 408.5)" ><path d="M0 1.2q0-1.2 1.2-1.2h4l1.6 1.8h5.5q1.2 0 1.2 1.2v7.3q0 1.2-1.2 1.2H1.2q-1.2 0-1.2-1.2z" fill="url(#fg3)"/><path d="M0.8 3.6h11.8v5.9H0.8z" fill="url(#fg4)"/></g>
<g transform="translate(451 410)" ><path d="M3 0v10" stroke="#d01010" stroke-width="2"/><path d="M0 8.5h6l-3 5z" fill="#d01010"/><circle cx="3" cy="14" r="1.6" fill="#222"/><rect x="6.4" y="10.2" width="5.4" height="5" fill="#58b848" stroke="#3a8a3a" stroke-width="0.7"/></g>
<g transform="translate(467 408.5)" ><path d="M0 1.2q0-1.2 1.2-1.2h4l1.6 1.8h5.5q1.2 0 1.2 1.2v7.3q0 1.2-1.2 1.2H1.2q-1.2 0-1.2-1.2z" fill="url(#fg3)"/><path d="M0.8 3.6h11.8v5.9H0.8z" fill="url(#fg4)"/></g>
<g transform="translate(472 411.5)" ><path d="M4.6 0.6v4.2L0.4 8.6" stroke="#6a6a8a" stroke-width="1.4" fill="none"/><path d="M4.6 4.8l3 2.4" stroke="#6a6a8a" stroke-width="1.2"/><rect x="7.2" y="7.6" width="5.4" height="5" fill="#58b848" stroke="#3a8a3a" stroke-width="0.7"/></g>
<path d="M489.4 416.5h3.8l-1.9 2.3z" fill="#1a1a1a"/>
<line x1="499.3" y1="409" x2="499.3" y2="425" stroke="#bcbcbc" stroke-width="1"/>
<g transform="translate(507.4 410.4)" ><g transform="scale(0.86 0.84)"><path d="M3.2 0.8L8.5 5.4 13.8 0.8 16.6 3.6 11.6 8.4 16.6 13.2 13.8 16 8.5 11.4 3.2 16 0.4 13.2 5.4 8.4 0.4 3.6z" fill="#e03a3a" stroke="#d02828" stroke-width="1.6" stroke-linejoin="round"/><path d="M3.4 2.4L8.5 7l5-4.6" stroke="#f08080" stroke-width="1" fill="none" opacity="0.7"/></g></g>
<g transform="translate(528 409)" ><path d="M0.5 6q3.6-5 7.8-2.6v10.2Q4 11.4 0.5 15z" fill="#6c6c6c" stroke="#555" stroke-width="0.6"/><path d="M5.5 4.6q3.6-5 7.8-2.6v10.2q-4.3-2.2-7.8 1.4z" fill="#888" stroke="#555" stroke-width="0.6"/><path d="M10.5 4.2q3.4-4.4 7-2v10q-3.6-2-7 1.4z" fill="#a4a4a4" stroke="#5a5a5a" stroke-width="0.6"/></g>
<g transform="translate(550 409)" ><path d="M0 1.2q0-1.2 1.2-1.2h4l1.6 1.8h8.5q1.2 0 1.2 1.2v10.3q0 1.2-1.2 1.2H1.2q-1.2 0-1.2-1.2z" fill="url(#fg3)"/><path d="M0.8 3.6h14.8v8.9H0.8z" fill="url(#fg4)"/></g>
<g transform="translate(555 414.5)" ><path d="M0.5 3.6L5 0v2.2h3.5v3H5v2.3z M12 5.2L7.6 8.8V6.6H4.6v-1h3V4.4z" fill="#e02828"/></g>
<path d="M575.4 414.4l2.2-1.8M575.4 414.4l2.4 1.2M587.6 416.2l1.4-2.4M587.6 416.2l-2.2-0.6" stroke="#d02828" stroke-width="1.2" fill="none"/>
<rect x="597.4" y="408.2" width="1.7" height="1.7" fill="#4a4a4a"/>
<rect x="597.4" y="413" width="1.7" height="1.7" fill="#4a4a4a"/>
<rect x="597.4" y="417.8" width="1.7" height="1.7" fill="#4a4a4a"/>
<rect x="597.4" y="422.6" width="1.7" height="1.7" fill="#4a4a4a"/>
<rect x="600.5" y="407" width="67" height="21" fill="#fdfdfd"/>
<g transform="translate(602 409)" ><path d="M0.5 9.5q1-8 8-8.5l6.5 3.5q-6 1-7 8z" fill="#6a6aa8" stroke="#3a3a78" stroke-width="0.7"/><path d="M1.5 8q1.4-5.5 7-6l4.4 2.4q-5 1.4-6.4 6.6z" fill="#9a9ad0"/></g>
<defs><linearGradient id="rb" x1="0" y1="0" x2="1" y2="0"><stop offset="0" stop-color="#d020d0"/><stop offset="0.25" stop-color="#2040e0"/><stop offset="0.5" stop-color="#20b040"/><stop offset="0.75" stop-color="#e8d020"/><stop offset="1" stop-color="#e02020"/></linearGradient></defs>
<rect x="603.4" y="422.2" width="12.4" height="2.4" fill="url(#rb)"/>
<path d="M671.8 416.1h5l-2.5 2.9z" fill="#1a1a1a"/>
<g transform="translate(683 409.8)" ><path d="M0.6 6L8 1Q14.4-0.6 17.4 8L14.8 9.2Q13 4.4 10.4 6 8.6 7.4 8.2 12z" fill="#fafafa" stroke="#505050" stroke-width="0.9" stroke-linejoin="round"/><path d="M8 1q-1 4 0.2 11" stroke="#777" stroke-width="0.6" fill="none" opacity="0.6"/></g>
<path d="M704.6 416.5h3.8l-1.9 2.3z" fill="#1a1a1a"/>
<g transform="translate(713 409.8)" ><path d="M0.6 6L8 1Q14.4-0.6 17.4 8L14.8 9.2Q13 4.4 10.4 6 8.6 7.4 8.2 12z" fill="#7272b2" stroke="#40406e" stroke-width="0.8" stroke-linejoin="round"/><path d="M2 6.2L8.2 2Q12 1.4 14 4 10.4 3 8.6 5.6 7.6 7 7.4 9.8z" fill="#a4a4d8"/><path d="M17 7.8L14.8 9Q13.4 5 11 5.6" stroke="#2c2c50" stroke-width="1.1" fill="none"/></g>
<path d="M734.6 416.5h3.8l-1.9 2.3z" fill="#1a1a1a"/>
<g transform="translate(743.5 408.2)" ><path d="M9 0.6l8 4.2-8 4.2-8-4.2z" fill="#a4a4dc"/><path d="M1 4.8l8 4.2v8.4l-8-4.2z" fill="#6e6eae"/><path d="M17 4.8l-8 4.2v8.4l8-4.2z" fill="#b0b0c2"/><path d="M9 0.6l8 4.2v8.4l-8 4.2-8-4.2V4.8zM1 4.8l8 4.2 8-4.2M9 9v8.4" fill="none" stroke="#4a4a80" stroke-width="1" stroke-linejoin="round"/><path d="M11 9.6l4.4-2.3v5.2L11 14.8z" fill="#e8e8ee"/></g>
<line x1="766.3" y1="409" x2="766.3" y2="425" stroke="#bcbcbc" stroke-width="1"/>
<rect x="768.5" y="407" width="73" height="21" fill="#fdfdfd"/>
<g transform="translate(771 407.8)" ><g transform="scale(0.8 0.76)"><path d="M9 0.6l8 4.2-8 4.2-8-4.2z" fill="#6a6ab4"/><path d="M1 4.8l8 4.2v8.4l-8-4.2z" fill="#34347a"/><path d="M17 4.8l-8 4.2v8.4l8-4.2z" fill="#4a4a94"/><path d="M9 0.6l8 4.2v8.4l-8 4.2-8-4.2V4.8zM1 4.8l8 4.2 8-4.2M9 9v8.4" fill="none" stroke="#2a2a60" stroke-width="1" stroke-linejoin="round"/><path d="M5 2.7l8 4.2M13 2.7l-8 4.2M1 9l8 4.2 8-4.2M5 6.9v8.4M13 6.9v8.4" stroke="#a0a0dc" stroke-width="0.8" fill="none"/></g></g>
<rect x="771.5" y="422.2" width="13" height="2.4" fill="url(#rb)"/>
<path d="M844.8 416.1h5l-2.5 2.9z" fill="#1a1a1a"/>
<g transform="translate(855.5 408)" ><path d="M9 0.6l8 4.2-8 4.2-8-4.2z" fill="#ffffff"/><path d="M1 4.8l8 4.2v8.4l-8-4.2z" fill="#ffffff"/><path d="M17 4.8l-8 4.2v8.4l8-4.2z" fill="#ffffff"/><path d="M9 0.6l8 4.2v8.4l-8 4.2-8-4.2V4.8zM1 4.8l8 4.2 8-4.2M9 9v8.4" fill="none" stroke="#555" stroke-width="1" stroke-linejoin="round"/><path d="M5 2.7l8 4.2v8.4M13 2.7l-8 4.2v8.4M1 9l8 4.2 8-4.2" stroke="#777" stroke-width="0.7" fill="none"/></g>
<path d="M878.4 416.5h3.8l-1.9 2.3z" fill="#1a1a1a"/>
<g transform="translate(885.5 408)" ><path d="M9 0.6l8 4.2-8 4.2-8-4.2z" fill="#6a6ab4"/><path d="M1 4.8l8 4.2v8.4l-8-4.2z" fill="#34347a"/><path d="M17 4.8l-8 4.2v8.4l8-4.2z" fill="#4a4a94"/><path d="M9 0.6l8 4.2v8.4l-8 4.2-8-4.2V4.8zM1 4.8l8 4.2 8-4.2M9 9v8.4" fill="none" stroke="#2a2a60" stroke-width="1" stroke-linejoin="round"/><path d="M5 2.7l8 4.2v8.4M13 2.7l-8 4.2v8.4M1 9l8 4.2 8-4.2" stroke="#a0a0dc" stroke-width="0.8" fill="none"/></g>
<path d="M908.4 416.5h3.8l-1.9 2.3z" fill="#1a1a1a"/>
<path d="M921 419.8L931.4 413.8" stroke="#505050" stroke-width="1.7"/>
<path d="M938.4 416.5h3.8l-1.9 2.3z" fill="#1a1a1a"/>
<g transform="translate(947 412.2)" ><g transform="scale(0.87)"><path d="M0.4 5L9.6 0.6 18.8 5 9.6 9.6z" fill="#7a7a7a" stroke="#3a3a3a" stroke-width="0.8"/><path d="M5 2.8l9.2 4.5M14.2 2.8L5 7.3" stroke="#333" stroke-width="0.8"/></g></g>
<path d="M968.6 416.5h3.8l-1.9 2.3z" fill="#1a1a1a"/>
<g transform="translate(976.6 410.6)" ><g transform="scale(0.9)"><path d="M0.4 5.6L9.4 0.6 18.4 5.6v3l-9 5-9-5z" fill="#2626a0" stroke="#1a1a70" stroke-width="0.7"/><path d="M1.4 5.6L9.4 1.4l8 4.2-8 4.4z" fill="#9aa0f2"/></g></g>
<path d="M998.6 416.5h3.8l-1.9 2.3z" fill="#1a1a1a"/>
<g transform="translate(1010.2 411.2)" ><g transform="scale(0.92 0.8)"><path d="M0 5.5l5-1.5v5l-5 1.5zM7 3l5-1.5v5L7 8zM0 12l5-1.5v4.4l-5 1.5zM7 9.8l5-1.5v4.6l-5 1.5z" fill="#5a5aa4" stroke="#3a3a80" stroke-width="0.5"/></g></g>
<g transform="translate(1031 410.4)" ><rect x="0.4" y="0.4" width="14.4" height="10.6" rx="1" fill="#2a4a80"/><rect x="1.6" y="1.6" width="12" height="8.2" fill="#3a86d8"/><path d="M1.6 1.6h12L1.6 7.4z" fill="#6ab4f4" opacity="0.7"/><path d="M6.2 11h2.8v2h2.2v1.5H4v-1.5h2.2z" fill="#333"/></g>
<g opacity="0.95" filter="url(#wsh)"><ellipse cx="903.5" cy="511.2" rx="9.5" ry="7" fill="#ffffff"/><ellipse cx="914" cy="516.6" rx="7" ry="5.4" fill="#ffffff"/><path d="M897 516l-2 4 5-2z" fill="#fff"/></g>
<defs><filter id="wsh" x="-20%" y="-20%" width="150%" height="150%"><feDropShadow dx="1" dy="1" stdDeviation="0.6" flood-color="#444" flood-opacity="0.55"/></filter></defs>
</svg>
<div id="txt">
<span class="t" id="t0" style="left:18.5px;top:4.11px;font-size:10.5px;color:#9a9a9a;letter-spacing:-0.056px;">Untitled* - HyperMesh 2019.1 - OptiStruct</span>
<span class="t" id="t1" style="left:5.5px;top:20.01px;font-size:10.5px;color:#5c5c5c;transform:scaleX(0.8569);transform-origin:0 50%;">File</span>
<span class="t" id="t2" style="left:32px;top:20.01px;font-size:10.5px;color:#5c5c5c;letter-spacing:-0.365px;">Edit</span>
<span class="t" id="t3" style="left:61px;top:20.01px;font-size:10.5px;color:#5c5c5c;transform:scaleX(0.8858);transform-origin:0 50%;">View</span>
<span class="t" id="t4" style="left:93px;top:20.01px;font-size:10.5px;color:#5c5c5c;letter-spacing:-0.188px;">Collectors</span>
<span class="t" id="t5" style="left:150px;top:20.01px;font-size:10.5px;color:#5c5c5c;letter-spacing:-0.158px;">Geometry</span>
<span class="t" id="t6" style="left:206px;top:20.01px;font-size:10.5px;color:#5c5c5c;letter-spacing:-0.229px;">Mesh</span>
<span class="t" id="t7" style="left:242.2px;top:20.01px;font-size:10.5px;color:#5c5c5c;letter-spacing:-0.189px;">Connectors</span>
<span class="t" id="t8" style="left:305.8px;top:20.01px;font-size:10.5px;color:#5c5c5c;letter-spacing:-0.051px;">Materials</span>
<span class="t" id="t9" style="left:359.5px;top:20.01px;font-size:10.5px;color:#5c5c5c;letter-spacing:-0.084px;">Properties</span>
<span class="t" id="t10" style="left:418.5px;top:20.01px;font-size:10.5px;color:#5c5c5c;transform:scaleX(0.8466);transform-origin:0 50%;">BCs</span>
<span class="t" id="t11" style="left:446.3px;top:20.01px;font-size:10.5px;color:#5c5c5c;letter-spacing:-0.363px;">Setup</span>
<span class="t" id="t12" style="left:484.5px;top:20.01px;font-size:10.5px;color:#5c5c5c;letter-spacing:-0.104px;">Tools</span>
<span class="t" id="t13" style="left:520.2px;top:20.01px;font-size:10.5px;color:#5c5c5c;letter-spacing:0.288px;">Morphing</span>
<span class="t" id="t14" style="left:577.5px;top:20.01px;font-size:10.5px;color:#5c5c5c;letter-spacing:-0.014px;">Optimization</span>
<span class="t" id="t15" style="left:647.2px;top:20.01px;font-size:10.5px;color:#5c5c5c;transform:scaleX(0.9279);transform-origin:0 50%;">Post</span>
<span class="t" id="t16" style="left:677.6px;top:20.01px;font-size:10.5px;color:#5c5c5c;transform:scaleX(0.8994);transform-origin:0 50%;">XYPlots</span>
<span class="t" id="t17" style="left:723.1px;top:20.01px;font-size:10.5px;color:#5c5c5c;letter-spacing:-0.323px;">Preferences</span>
<span class="t" id="t18" style="left:788px;top:20.01px;font-size:10.5px;color:#5c5c5c;letter-spacing:-0.084px;">Applications</span>
<span class="t" id="t19" style="left:855.6px;top:20.01px;font-size:10.5px;color:#5c5c5c;transform:scaleX(0.9348);transform-origin:0 50%;">Help</span>
<span class="t" id="t20" style="left:10.5px;top:68.26px;font-size:9.5px;color:#111;font-weight:bold;letter-spacing:-0.065px;">Utility</span>
<span class="t" id="t21" style="left:52.6px;top:68.26px;font-size:9.5px;color:#222;transform:scaleX(0.8797);transform-origin:0 50%;">Process Manager</span>
<span class="t" id="t22" style="left:146.7px;top:68.26px;font-size:9.5px;color:#222;transform:scaleX(0.8687);transform-origin:0 50%;">Organize</span>
<span class="t" id="t23" style="left:202.7px;top:68.26px;font-size:9.5px;color:#222;transform:scaleX(0.8889);transform-origin:0 50%;">Part</span>
<span class="t" id="t24" style="left:237.6px;top:68.26px;font-size:9.5px;color:#222;transform:scaleX(0.9082);transform-origin:0 50%;">Model</span>
<span class="t" id="t25" style="left:4.4px;top:274.94px;font-size:9.4px;color:#333;transform:scaleX(0.8945);transform-origin:0 50%;">Geom Tools</span>
<span class="t c" id="t26" style="left:77.4px;top:288.24px;font-size:9.4px;color:#1a1a1a;letter-spacing:-0.52px;">Preserve Edges</span>
<span class="t c" id="t27" style="left:77.4px;top:301.68px;font-size:9.4px;color:#1a1a1a;letter-spacing:-0.52px;">Project Points</span>
<span class="t c" id="t28" style="left:77.4px;top:315.12px;font-size:9.4px;color:#1a1a1a;letter-spacing:-0.52px;">Isolate Surface</span>
<span class="t c" id="t29" style="left:77.4px;top:328.56px;font-size:9.4px;color:#1a1a1a;letter-spacing:-0.52px;">Washer</span>
<span class="t c" id="t30" style="left:77.4px;top:342.00px;font-size:9.4px;color:#1a1a1a;letter-spacing:-0.52px;">Adj Circ Pts</span>
<span class="t" id="t31" style="left:4.4px;top:369.14px;font-size:9.4px;color:#333;letter-spacing:-0.417px;">Mesh Tools</span>
<span class="t c" id="t32" style="left:77.4px;top:382.24px;font-size:9.4px;color:#1a1a1a;letter-spacing:-0.52px;">Auto Connectors...</span>
<span class="t c" id="t33" style="left:77.4px;top:395.68px;font-size:9.4px;color:#1a1a1a;letter-spacing:-0.52px;">Quick TetraMesh...</span>
<span class="t c" id="t34" style="left:77.4px;top:409.12px;font-size:9.4px;color:#1a1a1a;letter-spacing:-0.52px;">Fix 2nd Order Midnodes</span>
<span class="t c" id="t35" style="left:77.4px;top:422.56px;font-size:9.4px;color:#1a1a1a;letter-spacing:-0.52px;">Solid Mesh Optimization</span>
<span class="t c" id="t36" style="left:77.4px;top:436.00px;font-size:9.4px;color:#1a1a1a;letter-spacing:-0.52px;">Add Washer</span>
<span class="t c" id="t37" style="left:39.2px;top:449.44px;font-size:9.4px;color:#1a1a1a;letter-spacing:-0.52px;">Trim Hole</span>
<span class="t c" id="t38" style="left:114.4px;top:449.44px;font-size:9.4px;color:#1a1a1a;letter-spacing:-0.52px;">Fill Hole</span>
<span class="t c" id="t39" style="left:39.2px;top:462.88px;font-size:9.4px;color:#1a1a1a;letter-spacing:-0.52px;">Box Trim</span>
<span class="t c" id="t40" style="left:114.4px;top:462.88px;font-size:9.4px;color:#1a1a1a;letter-spacing:-0.52px;">Bead</span>
<span class="t c" id="t41" style="left:39.2px;top:503.44px;font-size:9.4px;color:#1a1a1a;letter-spacing:-0.52px;">Summary</span>
<span class="t c" id="t42" style="left:39.2px;top:516.88px;font-size:9.4px;color:#1a1a1a;letter-spacing:-0.52px;">FEA</span>
<span class="t c" id="t43" style="left:114.4px;top:516.88px;font-size:9.4px;color:#1a1a1a;letter-spacing:-0.52px;">Opti</span>
<span class="t c" id="t44" style="left:39.2px;top:530.32px;font-size:9.4px;color:#1a1a1a;letter-spacing:-0.52px;">Geom/Mesh</span>
<span class="t c" id="t45" style="left:114.4px;top:530.32px;font-size:9.4px;color:#1a1a1a;letter-spacing:-0.52px;">User</span>
<span class="t c" id="t46" style="left:39.2px;top:543.76px;font-size:9.4px;color:#1a1a1a;letter-spacing:-0.52px;">Disp</span>
<span class="t c" id="t47" style="left:114.4px;top:543.76px;font-size:9.4px;color:#1a1a1a;letter-spacing:-0.52px;">QA/Model</span>
<span class="t" id="t48" style="left:11.2px;top:562.49px;font-size:11px;color:#555;letter-spacing:-0.185px;">Geometry</span>
<span class="t" id="t49" style="left:759.5px;top:562.11px;font-size:10.5px;color:#555;transform:scaleX(0.9412);transform-origin:0 50%;">007</span>
<span class="t" id="t50" style="left:873.5px;top:562.11px;font-size:10.5px;color:#555;transform:scaleX(0.9412);transform-origin:0 50%;">007</span>
<span class="t c" id="t51" style="left:387.3px;top:437.19px;font-size:11px;color:#2a2a2a;letter-spacing:-0.1px;">nodes</span>
<span class="t c" id="t52" style="left:387.3px;top:453.79px;font-size:11px;color:#2a2a2a;letter-spacing:-0.1px;">node edit</span>
<span class="t c" id="t53" style="left:387.3px;top:470.39px;font-size:11px;color:#2a2a2a;letter-spacing:-0.1px;">temp nodes</span>
<span class="t c" id="t54" style="left:387.3px;top:486.99px;font-size:11px;color:#2a2a2a;letter-spacing:-0.1px;">distance</span>
<span class="t c" id="t55" style="left:387.3px;top:503.59px;font-size:11px;color:#2a2a2a;letter-spacing:-0.1px;">points</span>
<span class="t c" id="t56" style="left:530.65px;top:437.19px;font-size:11px;color:#2a2a2a;letter-spacing:-0.1px;">lines</span>
<span class="t c" id="t57" style="left:530.65px;top:453.79px;font-size:11px;color:#2a2a2a;letter-spacing:-0.1px;">line edit</span>
<span class="t c" id="t58" style="left:530.65px;top:470.39px;font-size:11px;color:#2a2a2a;letter-spacing:-0.1px;">length</span>
<span class="t c" id="t59" style="left:668.8px;top:437.19px;font-size:11px;color:#2a2a2a;letter-spacing:-0.1px;">surfaces</span>
<span class="t c" id="t60" style="left:668.8px;top:453.79px;font-size:11px;color:#2a2a2a;letter-spacing:-0.1px;">surface edit</span>
<span class="t c" id="t61" style="left:668.8px;top:470.39px;font-size:11px;color:#2a2a2a;letter-spacing:-0.1px;">defeature</span>
<span class="t c" id="t62" style="left:668.8px;top:486.99px;font-size:11px;color:#2a2a2a;letter-spacing:-0.1px;">midsurface</span>
<span class="t c" id="t63" style="left:668.8px;top:503.59px;font-size:11px;color:#2a2a2a;letter-spacing:-0.1px;">dimensioning</span>
<span class="t c" id="t64" style="left:802.8px;top:437.19px;font-size:11px;color:#2a2a2a;letter-spacing:-0.1px;">solids</span>
<span class="t c" id="t65" style="left:802.8px;top:453.79px;font-size:11px;color:#2a2a2a;letter-spacing:-0.1px;">solid edit</span>
<span class="t c" id="t66" style="left:802.8px;top:470.39px;font-size:11px;color:#2a2a2a;letter-spacing:-0.1px;">ribs</span>
<span class="t c" id="t67" style="left:936.3px;top:437.19px;font-size:11px;color:#2a2a2a;letter-spacing:-0.1px;">quick edit</span>
<span class="t c" id="t68" style="left:936.3px;top:453.79px;font-size:11px;color:#2a2a2a;letter-spacing:-0.1px;">edge edit</span>
<span class="t c" id="t69" style="left:936.3px;top:470.39px;font-size:11px;color:#2a2a2a;letter-spacing:-0.1px;">point edit</span>
<span class="t c" id="t70" style="left:936.3px;top:486.99px;font-size:11px;color:#2a2a2a;letter-spacing:-0.1px;">autocleanup</span>
<span class="t" id="t71" style="left:1023px;top:437.89px;font-size:11px;color:#333;letter-spacing:-0.35px;">Geom</span>
<span class="t" id="t72" style="left:1023px;top:454.46px;font-size:11px;color:#333;letter-spacing:-0.35px;">1D</span>
<span class="t" id="t73" style="left:1023px;top:471.03px;font-size:11px;color:#333;letter-spacing:-0.35px;">2D</span>
<span class="t" id="t74" style="left:1023px;top:487.60px;font-size:11px;color:#333;letter-spacing:-0.35px;">3D</span>
<span class="t" id="t75" style="left:1023px;top:504.17px;font-size:11px;color:#333;letter-spacing:-0.35px;">Analysis</span>
<span class="t" id="t76" style="left:1023px;top:520.74px;font-size:11px;color:#333;letter-spacing:-0.35px;">Tool</span>
<span class="t" id="t77" style="left:1023px;top:537.31px;font-size:11px;color:#333;letter-spacing:-0.35px;">Post</span>
<span class="t" id="t78" style="left:969.2px;top:67.53px;font-size:10px;color:#f4f4f4;letter-spacing:0.512px;">Model Info: Untitled*</span>
<span class="t" id="t79" style="left:379.6px;top:349.14px;font-size:10px;color:#f0f0f0;font-weight:bold;">Z</span>
<span class="t" id="t80" style="left:405.4px;top:368.94px;font-size:10px;color:#f0f0f0;font-weight:bold;">X</span>
<span class="t" id="t81" style="left:352.8px;top:368.14px;font-size:10px;color:#f0f0f0;font-weight:bold;">Y</span>
<span class="t" id="t82" style="left:259.5px;top:38.15px;font-size:6.2px;color:#505050;font-weight:bold;">Y</span>
<span class="t" id="t83" style="left:265.8px;top:44.75px;font-size:6.2px;color:#505050;font-weight:bold;">X</span>
<span class="t" id="t84" style="left:281.2px;top:48.55px;font-size:6.2px;color:#505050;font-weight:bold;">Y</span>
<span class="t" id="t85" style="left:288.2px;top:42.95px;font-size:6.2px;color:#505050;font-weight:bold;">X</span>
<span class="t" id="t86" style="left:303.5px;top:38.15px;font-size:6.2px;color:#505050;font-weight:bold;">Z</span>
<span class="t" id="t87" style="left:309.8px;top:44.75px;font-size:6.2px;color:#505050;font-weight:bold;">X</span>
<span class="t" id="t88" style="left:324.5px;top:38.15px;font-size:6.2px;color:#505050;font-weight:bold;">Z</span>
<span class="t" id="t89" style="left:320px;top:44.75px;font-size:6.2px;color:#505050;font-weight:bold;">X</span>
<span class="t" id="t90" style="left:347.5px;top:38.15px;font-size:6.2px;color:#505050;font-weight:bold;">Z</span>
<span class="t" id="t91" style="left:353.8px;top:44.75px;font-size:6.2px;color:#505050;font-weight:bold;">Y</span>
<span class="t" id="t92" style="left:368.5px;top:38.15px;font-size:6.2px;color:#505050;font-weight:bold;">Z</span>
<span class="t" id="t93" style="left:364px;top:44.75px;font-size:6.2px;color:#505050;font-weight:bold;">Y</span>
<span class="t" id="t94" style="left:385.6px;top:40.95px;font-size:6.2px;color:#505050;font-weight:bold;">Y</span>
<span class="t" id="t95" style="left:391.8px;top:37.75px;font-size:6.2px;color:#505050;font-weight:bold;">Z</span>
<span class="t" id="t96" style="left:398.6px;top:40.95px;font-size:6.2px;color:#505050;font-weight:bold;">X</span>
<span class="t" id="t97" style="left:1036.2px;top:41.43px;font-size:16.5px;color:#111;font-weight:bold;font-family:"Liberation Serif",serif;">Σ</span>
<span class="t" id="t98" style="left:1059.2px;top:41.43px;font-size:16.5px;color:#111;font-weight:bold;font-family:"Liberation Serif",serif;">Σ</span>
<span class="t" id="t99" style="left:325.2px;top:228.47px;font-size:7px;color:#fff;font-weight:bold;">i</span>
<span class="t" id="t100" style="left:322.2px;top:239.34px;font-size:7.4px;color:#333;font-weight:bold;">123</span>
<span class="t" id="t101" style="left:321.2px;top:252.14px;font-size:5.5px;color:#222;">0</span>
<span class="t" id="t102" style="left:334px;top:248.84px;font-size:5.5px;color:#222;">1</span>
<span class="t" id="t103" style="left:328px;top:262.42px;font-size:6px;color:#222;">90°</span>
<span class="t" id="t104" style="left:321.5px;top:283.51px;font-size:7.2px;color:#7a3a10;font-weight:bold;">ABC</span>
<span class="t" id="t105" style="left:322.5px;top:305.71px;font-size:7.2px;color:#7a3a10;font-weight:bold;">ABC</span>
<span class="t" id="t106" style="left:579.4px;top:413.88px;font-size:6.4px;color:#3e5e50;font-weight:bold;">1</span>
<span class="t" id="t107" style="left:582.4px;top:408.18px;font-size:6.4px;color:#3e5e50;font-weight:bold;">2</span>
<span class="t" id="t108" style="left:579.4px;top:419.18px;font-size:6.4px;color:#3e5e50;font-weight:bold;">3</span>
<span class="t" id="t109" style="left:619.5px;top:412.38px;font-size:9px;color:#222;letter-spacing:-0.005px;">Auto</span>
<span class="t" id="t110" style="left:788px;top:412.38px;font-size:9px;color:#222;transform:scaleX(0.9185);transform-origin:0 50%;">By Comp</span>
<span class="t" id="t111" style="left:875.5px;top:537.61px;font-size:10.5px;color:rgba(160,160,160,0.45);letter-spacing:0.178px;">转到"设置"以激活 Windows。</span>
<span class="t" id="t112" style="left:827.8px;top:515.21px;font-size:25.5px;color:#ffffff;font-weight:700;text-shadow:1.7px 1.7px 0.9px rgba(50,50,50,0.85), 0 0 1.2px rgba(90,90,90,0.45);letter-spacing:7.984px;">知乎</span>
<span class="t" id="t113" style="left:907.6px;top:514.77px;font-size:26.5px;color:#ffffff;font-weight:700;text-shadow:1.7px 1.7px 0.9px rgba(50,50,50,0.85), 0 0 1.2px rgba(90,90,90,0.45);letter-spacing:1.521px;">@吉德CAE</span>
</div>
</body></html>
